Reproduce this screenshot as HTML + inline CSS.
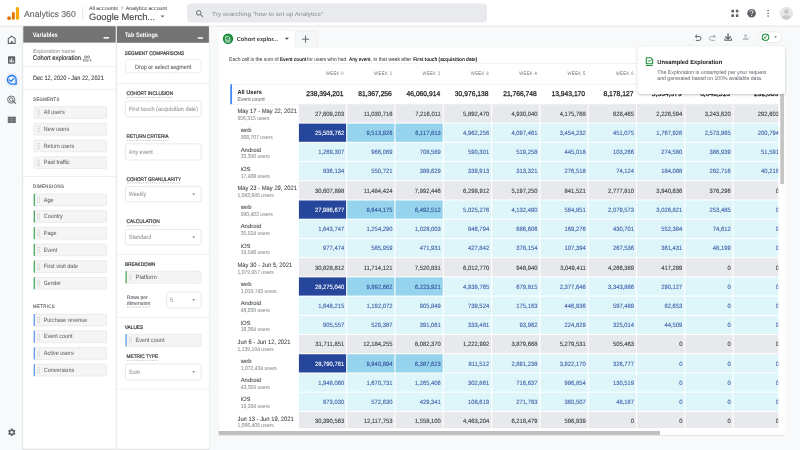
<!DOCTYPE html><html><head><meta charset="utf-8"><style>*{margin:0;padding:0}html,body{width:800px;height:450px;overflow:hidden;background:#f8f9fa}svg{display:block;will-change:transform;text-rendering:geometricPrecision;font-family:"Liberation Sans",sans-serif}</style></head><body>
<svg width="800" height="450" viewBox="0 0 800 450">
<defs><filter id="sh" x="-10%" y="-20%" width="120%" height="150%"><feDropShadow dx="0" dy="0.8" stdDeviation="1.1" flood-color="#3c4043" flood-opacity="0.35"/></filter><filter id="sh2" x="-5%" y="-5%" width="110%" height="110%"><feDropShadow dx="0" dy="0.4" stdDeviation="0.5" flood-color="#3c4043" flood-opacity="0.25"/></filter><clipPath id="tclip"><rect x="218.5" y="63.9" width="559.8" height="364.0"/></clipPath></defs>
<rect x="0.00" y="0.00" width="800.00" height="450.00" fill="#f8f9fa"/>
<rect x="0.00" y="0.00" width="800.00" height="25.60" fill="#ffffff"/>
<rect x="0.00" y="25.60" width="800.00" height="1.00" fill="#e3e5e8"/>
<circle cx="9.1" cy="18.2" r="1.85" fill="#e37400"/>
<rect x="11.90" y="12.00" width="2.90" height="7.80" fill="#e37400" rx="1.40"/>
<rect x="15.90" y="7.00" width="3.20" height="12.80" fill="#f9ab00" rx="1.50"/>
<text x="24.00" y="17.00" font-size="8.66" fill="#5f6368" stroke="#5f6368" stroke-width="0.10" textLength="51.81" lengthAdjust="spacingAndGlyphs">Analytics 360</text>
<rect x="82.40" y="6.50" width="0.80" height="13.00" fill="#dadce0"/>
<text x="88.92" y="9.65" font-size="5.20" fill="#5f6368" stroke="#5f6368" stroke-width="0.10" textLength="28.96" lengthAdjust="spacingAndGlyphs">All accounts</text>
<path d="M121.2 6.4l1.6 1.6-1.6 1.6" fill="none" stroke="#5f6368" stroke-width="0.6"/>
<text x="125.72" y="9.65" font-size="5.20" fill="#5f6368" stroke="#5f6368" stroke-width="0.10" textLength="41.26" lengthAdjust="spacingAndGlyphs">Analytics account</text>
<text x="88.97" y="20.00" font-size="9.40" fill="#3c4043" stroke="#3c4043" stroke-width="0.10" textLength="66.16" lengthAdjust="spacingAndGlyphs">Google Merch...</text>
<path d="M160.5 15.6h4.0l-2.0 2.0z" fill="#5f6368"/>
<rect x="187.00" y="3.50" width="300.00" height="19.10" fill="#e9eaee" rx="4.00"/>
<g transform="translate(195.0,9.0) scale(0.4)"><path fill="#5f6368" d="M15.5 14h-.79l-.28-.27A6.47 6.47 0 0 0 16 9.5 6.5 6.5 0 1 0 9.5 16c1.61 0 3.09-.59 4.23-1.57l.27.28v.79l5 4.99L20.49 19l-4.99-5zm-6 0C7.01 14 5 11.99 5 9.5S7.01 5 9.5 5 14 7.01 14 9.5 11.99 14 9.5 14z"/></g>
<text x="212.09" y="15.50" font-size="5.90" fill="#8d9196" stroke="#8d9196" stroke-width="0.03" textLength="110.71" lengthAdjust="spacingAndGlyphs">Try searching “how to set up Analytics”</text>
<rect x="731.40" y="9.80" width="2.60" height="2.60" fill="#5f6368" rx="0.30"/>
<rect x="735.80" y="9.80" width="2.60" height="2.60" fill="#5f6368" rx="0.30"/>
<rect x="731.40" y="14.30" width="2.60" height="2.60" fill="#5f6368" rx="0.30"/>
<rect x="735.80" y="14.30" width="2.60" height="2.60" fill="#5f6368" rx="0.30"/>
<circle cx="751.6" cy="13.2" r="4.3" fill="#5f6368"/>
<path d="M750.1 12.0c0-.9.7-1.6 1.5-1.6s1.5.6 1.5 1.4c0 1.1-1.4 1.1-1.4 2.3" fill="none" stroke="#fff" stroke-width="0.85"/><circle cx="751.7" cy="15.6" r="0.5" fill="#fff"/>
<circle cx="768.1" cy="10.50" r="0.8" fill="#5f6368"/>
<circle cx="768.1" cy="13.30" r="0.8" fill="#5f6368"/>
<circle cx="768.1" cy="16.10" r="0.8" fill="#5f6368"/>
<circle cx="786.4" cy="13.35" r="6.6" fill="#e6e6e6"/>
<circle cx="786.4" cy="11.6" r="2.3" fill="#c8c8c8"/>
<path d="M782.0 17.6c.9-1.6 2.6-2.4 4.4-2.4s3.5.8 4.4 2.4c-1.1 1.2-2.7 1.9-4.4 1.9s-3.3-.7-4.4-1.9z" fill="#c8c8c8"/>
<rect x="21.90" y="26.60" width="2.00" height="423.40" fill="#eaebed"/>
<path d="M8.3 43.4v-4.6l3.4-2.7 3.4 2.7v4.6z" fill="none" stroke="#5f6368" stroke-width="1.1" stroke-linejoin="round"/>
<rect x="10.90" y="40.90" width="1.70" height="2.50" fill="#5f6368"/>
<rect x="8.00" y="56.20" width="7.20" height="7.60" fill="#5f6368" rx="0.70"/>
<rect x="9.60" y="59.60" width="1.00" height="2.80" fill="#fff"/>
<rect x="11.20" y="58.20" width="1.00" height="4.20" fill="#fff"/>
<rect x="12.80" y="60.60" width="1.00" height="1.80" fill="#fff"/>
<circle cx="11.9" cy="80.0" r="7.2" fill="#e8f0fe"/>
<path d="M15.6 84.1h-3.8a4.3 4.3 0 1 1 4.3-4.3v4.3z" fill="none" stroke="#1a73e8" stroke-width="1.3"/>
<path d="M8.9 79.5l2.0 2.0 3.3-3.3" fill="none" stroke="#1a73e8" stroke-width="1.1"/>
<circle cx="11.2" cy="99.6" r="3.6" fill="none" stroke="#5f6368" stroke-width="0.95"/>
<circle cx="11.2" cy="99.6" r="1.7" fill="none" stroke="#5f6368" stroke-width="0.95"/>
<path d="M11.6 100.0l1.4 3.6 0.7-1.3 1.9 1.9 0.8-0.8-1.9-1.9 1.3-0.7z" fill="#5f6368" stroke="#f8f9fa" stroke-width="0.3"/>
<rect x="7.80" y="116.70" width="8.00" height="6.20" fill="#5f6368"/>
<line x1="8.20" y1="118.80" x2="15.40" y2="118.80" stroke="#a9acb0" stroke-width="0.50"/>
<line x1="8.20" y1="120.80" x2="15.40" y2="120.80" stroke="#a9acb0" stroke-width="0.50"/>
<line x1="11.80" y1="117.10" x2="11.80" y2="122.50" stroke="#a9acb0" stroke-width="0.50"/>
<g transform="translate(7.1,427.6) scale(0.39)"><path fill="#5f6368" d="M19.14 12.94c.04-.3.06-.61.06-.94 0-.32-.02-.64-.07-.94l2.03-1.58a.49.49 0 0 0 .12-.61l-1.92-3.32a.49.49 0 0 0-.59-.22l-2.39.96c-.5-.38-1.03-.7-1.62-.94l-.36-2.54a.484.484 0 0 0-.48-.41h-3.84c-.24 0-.43.17-.47.41l-.36 2.54c-.59.24-1.13.57-1.62.94l-2.39-.96a.49.49 0 0 0-.59.22L2.74 8.87c-.12.21-.08.47.12.61l2.03 1.58c-.05.3-.09.63-.09.94s.02.64.07.94l-2.03 1.58a.49.49 0 0 0-.12.61l1.92 3.32c.12.22.37.29.59.22l2.39-.96c.5.38 1.03.7 1.62.94l.36 2.54c.05.24.24.41.48.41h3.84c.24 0 .44-.17.47-.41l.36-2.54c.59-.24 1.13-.56 1.62-.94l2.39.96c.22.08.47 0 .59-.22l1.92-3.32c.12-.22.07-.47-.12-.61l-2.01-1.58zM12 15.6c-1.98 0-3.6-1.62-3.6-3.6s1.62-3.6 3.6-3.6 3.6 1.62 3.6 3.6-1.62 3.6-3.6 3.6z"/></g>
<rect x="23.30" y="26.20" width="93.00" height="423.00" fill="#ffffff"/>
<rect x="115.70" y="26.20" width="1.20" height="423.80" fill="#e6e7e9"/>
<rect x="23.30" y="448.60" width="186.00" height="1.40" fill="#e6e7e9"/>
<rect x="23.30" y="26.20" width="92.40" height="16.40" fill="#737373"/>
<text x="32.87" y="36.90" font-size="6.60" fill="#ffffff" font-weight="bold" textLength="24.86" lengthAdjust="spacingAndGlyphs">Variables</text>
<rect x="103.60" y="37.10" width="5.40" height="1.50" fill="#ffffff"/>
<text x="32.91" y="53.00" font-size="5.50" fill="#9aa0a6" stroke="#9aa0a6" stroke-width="0.10" textLength="41.98" lengthAdjust="spacingAndGlyphs">Exploration name</text>
<text x="32.87" y="60.30" font-size="6.70" fill="#202124" stroke="#202124" stroke-width="0.10" textLength="48.27" lengthAdjust="spacingAndGlyphs">Cohort exploration</text>
<circle cx="85.6" cy="56.9" r="1.05" fill="none" stroke="#5f6368" stroke-width="0.75"/><circle cx="88.5" cy="56.9" r="1.0" fill="none" stroke="#5f6368" stroke-width="0.75"/>
<path d="M83.1 61.0v-0.6c0-.9 1.5-1.4 2.5-1.4s2.5.5 2.5 1.4v0.6z" fill="none" stroke="#5f6368" stroke-width="0.7"/><path d="M89.2 59.0c.9.1 1.8.6 1.8 1.4v0.6h-1.3" fill="none" stroke="#5f6368" stroke-width="0.7"/>
<rect x="23.30" y="66.30" width="92.40" height="0.70" fill="#e8eaed"/>
<text x="32.88" y="80.10" font-size="6.30" fill="#3c4043" stroke="#3c4043" stroke-width="0.10" textLength="70.94" lengthAdjust="spacingAndGlyphs">Dec 12, 2020 - Jan 22, 2021</text>
<rect x="23.30" y="88.90" width="92.40" height="0.70" fill="#e8eaed"/>
<text x="33.23" y="100.50" font-size="5.00" fill="#5f6368" letter-spacing="0.45" stroke="#5f6368" stroke-width="0.15" textLength="26.45" lengthAdjust="spacingAndGlyphs">SEGMENTS</text>
<rect x="33.90" y="106.60" width="72.60" height="11.80" fill="#f5f5f5" rx="1.20" stroke="#e3e3e3" stroke-width="0.6"/>
<rect x="37.20" y="109.60" width="1.00" height="0.90" fill="#cdcdcd"/>
<rect x="38.90" y="109.60" width="1.00" height="0.90" fill="#cdcdcd"/>
<rect x="37.20" y="111.35" width="1.00" height="0.90" fill="#cdcdcd"/>
<rect x="38.90" y="111.35" width="1.00" height="0.90" fill="#cdcdcd"/>
<rect x="37.20" y="113.10" width="1.00" height="0.90" fill="#cdcdcd"/>
<rect x="38.90" y="113.10" width="1.00" height="0.90" fill="#cdcdcd"/>
<rect x="37.20" y="114.85" width="1.00" height="0.90" fill="#cdcdcd"/>
<rect x="38.90" y="114.85" width="1.00" height="0.90" fill="#cdcdcd"/>
<text x="43.79" y="114.20" font-size="6.00" fill="#5f6368" stroke="#5f6368" stroke-width="0.04" textLength="20.82" lengthAdjust="spacingAndGlyphs">All users</text>
<rect x="33.90" y="123.32" width="72.60" height="11.80" fill="#f5f5f5" rx="1.20" stroke="#e3e3e3" stroke-width="0.6"/>
<rect x="37.20" y="126.32" width="1.00" height="0.90" fill="#cdcdcd"/>
<rect x="38.90" y="126.32" width="1.00" height="0.90" fill="#cdcdcd"/>
<rect x="37.20" y="128.07" width="1.00" height="0.90" fill="#cdcdcd"/>
<rect x="38.90" y="128.07" width="1.00" height="0.90" fill="#cdcdcd"/>
<rect x="37.20" y="129.82" width="1.00" height="0.90" fill="#cdcdcd"/>
<rect x="38.90" y="129.82" width="1.00" height="0.90" fill="#cdcdcd"/>
<rect x="37.20" y="131.57" width="1.00" height="0.90" fill="#cdcdcd"/>
<rect x="38.90" y="131.57" width="1.00" height="0.90" fill="#cdcdcd"/>
<text x="43.79" y="130.92" font-size="6.00" fill="#5f6368" stroke="#5f6368" stroke-width="0.04" textLength="25.42" lengthAdjust="spacingAndGlyphs">New users</text>
<rect x="33.90" y="140.04" width="72.60" height="11.80" fill="#f5f5f5" rx="1.20" stroke="#e3e3e3" stroke-width="0.6"/>
<rect x="37.20" y="143.04" width="1.00" height="0.90" fill="#cdcdcd"/>
<rect x="38.90" y="143.04" width="1.00" height="0.90" fill="#cdcdcd"/>
<rect x="37.20" y="144.79" width="1.00" height="0.90" fill="#cdcdcd"/>
<rect x="38.90" y="144.79" width="1.00" height="0.90" fill="#cdcdcd"/>
<rect x="37.20" y="146.54" width="1.00" height="0.90" fill="#cdcdcd"/>
<rect x="38.90" y="146.54" width="1.00" height="0.90" fill="#cdcdcd"/>
<rect x="37.20" y="148.29" width="1.00" height="0.90" fill="#cdcdcd"/>
<rect x="38.90" y="148.29" width="1.00" height="0.90" fill="#cdcdcd"/>
<text x="43.79" y="147.64" font-size="6.00" fill="#5f6368" stroke="#5f6368" stroke-width="0.04" textLength="30.42" lengthAdjust="spacingAndGlyphs">Return users</text>
<rect x="33.90" y="156.76" width="72.60" height="11.80" fill="#f5f5f5" rx="1.20" stroke="#e3e3e3" stroke-width="0.6"/>
<rect x="37.20" y="159.76" width="1.00" height="0.90" fill="#cdcdcd"/>
<rect x="38.90" y="159.76" width="1.00" height="0.90" fill="#cdcdcd"/>
<rect x="37.20" y="161.51" width="1.00" height="0.90" fill="#cdcdcd"/>
<rect x="38.90" y="161.51" width="1.00" height="0.90" fill="#cdcdcd"/>
<rect x="37.20" y="163.26" width="1.00" height="0.90" fill="#cdcdcd"/>
<rect x="38.90" y="163.26" width="1.00" height="0.90" fill="#cdcdcd"/>
<rect x="37.20" y="165.01" width="1.00" height="0.90" fill="#cdcdcd"/>
<rect x="38.90" y="165.01" width="1.00" height="0.90" fill="#cdcdcd"/>
<text x="43.79" y="164.36" font-size="6.00" fill="#5f6368" stroke="#5f6368" stroke-width="0.04" textLength="26.02" lengthAdjust="spacingAndGlyphs">Paid traffic</text>
<rect x="23.30" y="176.20" width="92.40" height="0.70" fill="#e8eaed"/>
<text x="33.03" y="187.90" font-size="5.00" fill="#5f6368" letter-spacing="0.45" stroke="#5f6368" stroke-width="0.15" textLength="31.15" lengthAdjust="spacingAndGlyphs">DIMENSIONS</text>
<rect x="33.90" y="193.90" width="72.60" height="11.80" fill="#f5f5f5" rx="1.20" stroke="#e3e3e3" stroke-width="0.6"/>
<rect x="33.70" y="193.70" width="1.25" height="12.20" fill="#46ab5c" rx="0.40"/>
<rect x="37.20" y="196.90" width="1.00" height="0.90" fill="#cdcdcd"/>
<rect x="38.90" y="196.90" width="1.00" height="0.90" fill="#cdcdcd"/>
<rect x="37.20" y="198.65" width="1.00" height="0.90" fill="#cdcdcd"/>
<rect x="38.90" y="198.65" width="1.00" height="0.90" fill="#cdcdcd"/>
<rect x="37.20" y="200.40" width="1.00" height="0.90" fill="#cdcdcd"/>
<rect x="38.90" y="200.40" width="1.00" height="0.90" fill="#cdcdcd"/>
<rect x="37.20" y="202.15" width="1.00" height="0.90" fill="#cdcdcd"/>
<rect x="38.90" y="202.15" width="1.00" height="0.90" fill="#cdcdcd"/>
<text x="43.79" y="201.50" font-size="6.00" fill="#5f6368" stroke="#5f6368" stroke-width="0.04" textLength="9.82" lengthAdjust="spacingAndGlyphs">Age</text>
<rect x="33.90" y="210.60" width="72.60" height="11.80" fill="#f5f5f5" rx="1.20" stroke="#e3e3e3" stroke-width="0.6"/>
<rect x="33.70" y="210.40" width="1.25" height="12.20" fill="#46ab5c" rx="0.40"/>
<rect x="37.20" y="213.60" width="1.00" height="0.90" fill="#cdcdcd"/>
<rect x="38.90" y="213.60" width="1.00" height="0.90" fill="#cdcdcd"/>
<rect x="37.20" y="215.35" width="1.00" height="0.90" fill="#cdcdcd"/>
<rect x="38.90" y="215.35" width="1.00" height="0.90" fill="#cdcdcd"/>
<rect x="37.20" y="217.10" width="1.00" height="0.90" fill="#cdcdcd"/>
<rect x="38.90" y="217.10" width="1.00" height="0.90" fill="#cdcdcd"/>
<rect x="37.20" y="218.85" width="1.00" height="0.90" fill="#cdcdcd"/>
<rect x="38.90" y="218.85" width="1.00" height="0.90" fill="#cdcdcd"/>
<text x="43.79" y="218.20" font-size="6.00" fill="#5f6368" stroke="#5f6368" stroke-width="0.04" textLength="19.02" lengthAdjust="spacingAndGlyphs">Country</text>
<rect x="33.90" y="227.30" width="72.60" height="11.80" fill="#f5f5f5" rx="1.20" stroke="#e3e3e3" stroke-width="0.6"/>
<rect x="33.70" y="227.10" width="1.25" height="12.20" fill="#46ab5c" rx="0.40"/>
<rect x="37.20" y="230.30" width="1.00" height="0.90" fill="#cdcdcd"/>
<rect x="38.90" y="230.30" width="1.00" height="0.90" fill="#cdcdcd"/>
<rect x="37.20" y="232.05" width="1.00" height="0.90" fill="#cdcdcd"/>
<rect x="38.90" y="232.05" width="1.00" height="0.90" fill="#cdcdcd"/>
<rect x="37.20" y="233.80" width="1.00" height="0.90" fill="#cdcdcd"/>
<rect x="38.90" y="233.80" width="1.00" height="0.90" fill="#cdcdcd"/>
<rect x="37.20" y="235.55" width="1.00" height="0.90" fill="#cdcdcd"/>
<rect x="38.90" y="235.55" width="1.00" height="0.90" fill="#cdcdcd"/>
<text x="43.79" y="234.90" font-size="6.00" fill="#5f6368" stroke="#5f6368" stroke-width="0.04" textLength="12.62" lengthAdjust="spacingAndGlyphs">Page</text>
<rect x="33.90" y="244.00" width="72.60" height="11.80" fill="#f5f5f5" rx="1.20" stroke="#e3e3e3" stroke-width="0.6"/>
<rect x="33.70" y="243.80" width="1.25" height="12.20" fill="#46ab5c" rx="0.40"/>
<rect x="37.20" y="247.00" width="1.00" height="0.90" fill="#cdcdcd"/>
<rect x="38.90" y="247.00" width="1.00" height="0.90" fill="#cdcdcd"/>
<rect x="37.20" y="248.75" width="1.00" height="0.90" fill="#cdcdcd"/>
<rect x="38.90" y="248.75" width="1.00" height="0.90" fill="#cdcdcd"/>
<rect x="37.20" y="250.50" width="1.00" height="0.90" fill="#cdcdcd"/>
<rect x="38.90" y="250.50" width="1.00" height="0.90" fill="#cdcdcd"/>
<rect x="37.20" y="252.25" width="1.00" height="0.90" fill="#cdcdcd"/>
<rect x="38.90" y="252.25" width="1.00" height="0.90" fill="#cdcdcd"/>
<text x="43.79" y="251.60" font-size="6.00" fill="#5f6368" stroke="#5f6368" stroke-width="0.04" textLength="13.42" lengthAdjust="spacingAndGlyphs">Event</text>
<rect x="33.90" y="260.70" width="72.60" height="11.80" fill="#f5f5f5" rx="1.20" stroke="#e3e3e3" stroke-width="0.6"/>
<rect x="33.70" y="260.50" width="1.25" height="12.20" fill="#46ab5c" rx="0.40"/>
<rect x="37.20" y="263.70" width="1.00" height="0.90" fill="#cdcdcd"/>
<rect x="38.90" y="263.70" width="1.00" height="0.90" fill="#cdcdcd"/>
<rect x="37.20" y="265.45" width="1.00" height="0.90" fill="#cdcdcd"/>
<rect x="38.90" y="265.45" width="1.00" height="0.90" fill="#cdcdcd"/>
<rect x="37.20" y="267.20" width="1.00" height="0.90" fill="#cdcdcd"/>
<rect x="38.90" y="267.20" width="1.00" height="0.90" fill="#cdcdcd"/>
<rect x="37.20" y="268.95" width="1.00" height="0.90" fill="#cdcdcd"/>
<rect x="38.90" y="268.95" width="1.00" height="0.90" fill="#cdcdcd"/>
<text x="43.79" y="268.30" font-size="6.00" fill="#5f6368" stroke="#5f6368" stroke-width="0.04" textLength="34.32" lengthAdjust="spacingAndGlyphs">First visit date</text>
<rect x="33.90" y="277.40" width="72.60" height="11.80" fill="#f5f5f5" rx="1.20" stroke="#e3e3e3" stroke-width="0.6"/>
<rect x="33.70" y="277.20" width="1.25" height="12.20" fill="#46ab5c" rx="0.40"/>
<rect x="37.20" y="280.40" width="1.00" height="0.90" fill="#cdcdcd"/>
<rect x="38.90" y="280.40" width="1.00" height="0.90" fill="#cdcdcd"/>
<rect x="37.20" y="282.15" width="1.00" height="0.90" fill="#cdcdcd"/>
<rect x="38.90" y="282.15" width="1.00" height="0.90" fill="#cdcdcd"/>
<rect x="37.20" y="283.90" width="1.00" height="0.90" fill="#cdcdcd"/>
<rect x="38.90" y="283.90" width="1.00" height="0.90" fill="#cdcdcd"/>
<rect x="37.20" y="285.65" width="1.00" height="0.90" fill="#cdcdcd"/>
<rect x="38.90" y="285.65" width="1.00" height="0.90" fill="#cdcdcd"/>
<text x="43.79" y="285.00" font-size="6.00" fill="#5f6368" stroke="#5f6368" stroke-width="0.04" textLength="17.32" lengthAdjust="spacingAndGlyphs">Gender</text>
<text x="33.12" y="307.80" font-size="5.00" fill="#5f6368" letter-spacing="0.45" stroke="#5f6368" stroke-width="0.15" textLength="21.95" lengthAdjust="spacingAndGlyphs">METRICS</text>
<rect x="33.90" y="314.10" width="72.60" height="11.80" fill="#f5f5f5" rx="1.20" stroke="#e3e3e3" stroke-width="0.6"/>
<rect x="33.70" y="313.90" width="1.25" height="12.20" fill="#5f9bf6" rx="0.40"/>
<rect x="37.20" y="317.10" width="1.00" height="0.90" fill="#cdcdcd"/>
<rect x="38.90" y="317.10" width="1.00" height="0.90" fill="#cdcdcd"/>
<rect x="37.20" y="318.85" width="1.00" height="0.90" fill="#cdcdcd"/>
<rect x="38.90" y="318.85" width="1.00" height="0.90" fill="#cdcdcd"/>
<rect x="37.20" y="320.60" width="1.00" height="0.90" fill="#cdcdcd"/>
<rect x="38.90" y="320.60" width="1.00" height="0.90" fill="#cdcdcd"/>
<rect x="37.20" y="322.35" width="1.00" height="0.90" fill="#cdcdcd"/>
<rect x="38.90" y="322.35" width="1.00" height="0.90" fill="#cdcdcd"/>
<text x="43.79" y="321.70" font-size="6.00" fill="#5f6368" stroke="#5f6368" stroke-width="0.04" textLength="43.32" lengthAdjust="spacingAndGlyphs">Purchase revenue</text>
<rect x="33.90" y="330.82" width="72.60" height="11.80" fill="#f5f5f5" rx="1.20" stroke="#e3e3e3" stroke-width="0.6"/>
<rect x="33.70" y="330.62" width="1.25" height="12.20" fill="#5f9bf6" rx="0.40"/>
<rect x="37.20" y="333.82" width="1.00" height="0.90" fill="#cdcdcd"/>
<rect x="38.90" y="333.82" width="1.00" height="0.90" fill="#cdcdcd"/>
<rect x="37.20" y="335.57" width="1.00" height="0.90" fill="#cdcdcd"/>
<rect x="38.90" y="335.57" width="1.00" height="0.90" fill="#cdcdcd"/>
<rect x="37.20" y="337.32" width="1.00" height="0.90" fill="#cdcdcd"/>
<rect x="38.90" y="337.32" width="1.00" height="0.90" fill="#cdcdcd"/>
<rect x="37.20" y="339.07" width="1.00" height="0.90" fill="#cdcdcd"/>
<rect x="38.90" y="339.07" width="1.00" height="0.90" fill="#cdcdcd"/>
<text x="43.79" y="338.42" font-size="6.00" fill="#5f6368" stroke="#5f6368" stroke-width="0.04" textLength="28.82" lengthAdjust="spacingAndGlyphs">Event count</text>
<rect x="33.90" y="347.54" width="72.60" height="11.80" fill="#f5f5f5" rx="1.20" stroke="#e3e3e3" stroke-width="0.6"/>
<rect x="33.70" y="347.34" width="1.25" height="12.20" fill="#5f9bf6" rx="0.40"/>
<rect x="37.20" y="350.54" width="1.00" height="0.90" fill="#cdcdcd"/>
<rect x="38.90" y="350.54" width="1.00" height="0.90" fill="#cdcdcd"/>
<rect x="37.20" y="352.29" width="1.00" height="0.90" fill="#cdcdcd"/>
<rect x="38.90" y="352.29" width="1.00" height="0.90" fill="#cdcdcd"/>
<rect x="37.20" y="354.04" width="1.00" height="0.90" fill="#cdcdcd"/>
<rect x="38.90" y="354.04" width="1.00" height="0.90" fill="#cdcdcd"/>
<rect x="37.20" y="355.79" width="1.00" height="0.90" fill="#cdcdcd"/>
<rect x="38.90" y="355.79" width="1.00" height="0.90" fill="#cdcdcd"/>
<text x="43.79" y="355.14" font-size="6.00" fill="#5f6368" stroke="#5f6368" stroke-width="0.04" textLength="29.92" lengthAdjust="spacingAndGlyphs">Active users</text>
<rect x="33.90" y="364.26" width="72.60" height="11.80" fill="#f5f5f5" rx="1.20" stroke="#e3e3e3" stroke-width="0.6"/>
<rect x="33.70" y="364.06" width="1.25" height="12.20" fill="#5f9bf6" rx="0.40"/>
<rect x="37.20" y="367.26" width="1.00" height="0.90" fill="#cdcdcd"/>
<rect x="38.90" y="367.26" width="1.00" height="0.90" fill="#cdcdcd"/>
<rect x="37.20" y="369.01" width="1.00" height="0.90" fill="#cdcdcd"/>
<rect x="38.90" y="369.01" width="1.00" height="0.90" fill="#cdcdcd"/>
<rect x="37.20" y="370.76" width="1.00" height="0.90" fill="#cdcdcd"/>
<rect x="38.90" y="370.76" width="1.00" height="0.90" fill="#cdcdcd"/>
<rect x="37.20" y="372.51" width="1.00" height="0.90" fill="#cdcdcd"/>
<rect x="38.90" y="372.51" width="1.00" height="0.90" fill="#cdcdcd"/>
<text x="43.79" y="371.86" font-size="6.00" fill="#5f6368" stroke="#5f6368" stroke-width="0.04" textLength="30.42" lengthAdjust="spacingAndGlyphs">Conversions</text>
<rect x="116.90" y="26.20" width="92.20" height="422.40" fill="#ffffff"/>
<rect x="208.90" y="26.20" width="0.90" height="423.80" fill="#eceef0"/>
<rect x="116.90" y="26.20" width="92.00" height="16.60" fill="#737373"/>
<text x="124.88" y="37.20" font-size="6.40" fill="#ffffff" font-weight="bold" textLength="33.05" lengthAdjust="spacingAndGlyphs">Tab Settings</text>
<rect x="197.80" y="37.30" width="5.20" height="1.50" fill="#ffffff"/>
<text x="124.82" y="55.00" font-size="5.20" fill="#3c4043" stroke="#3c4043" stroke-width="0.22" textLength="59.26" lengthAdjust="spacingAndGlyphs">SEGMENT COMPARISONS</text>
<rect x="125.40" y="59.60" width="75.80" height="13.00" fill="none" rx="2.20" stroke="#cfd1d4" stroke-width="0.8" stroke-dasharray="1 1.1"/>
<text x="134.99" y="68.50" font-size="6.00" fill="#5f6368" stroke="#5f6368" stroke-width="0.10" textLength="56.32" lengthAdjust="spacingAndGlyphs">Drop or select segment</text>
<rect x="116.90" y="83.10" width="92.00" height="0.70" fill="#e8eaed"/>
<text x="126.62" y="95.00" font-size="5.20" fill="#3c4043" stroke="#3c4043" stroke-width="0.22" textLength="46.46" lengthAdjust="spacingAndGlyphs">COHORT INCLUSION</text>
<line x1="126.80" y1="97.40" x2="172.90" y2="97.40" stroke="#9aa0a6" stroke-width="0.70" stroke-dasharray="0.9 0.9"/>
<rect x="125.40" y="101.00" width="75.80" height="15.80" fill="#ffffff" rx="2.50" stroke="#e1e3e6" stroke-width="0.8"/>
<text x="128.79" y="111.00" font-size="6.10" fill="#9aa0a6" stroke="#9aa0a6" stroke-width="0.10" textLength="69.23" lengthAdjust="spacingAndGlyphs">First touch (acquisition date)</text>
<text x="126.62" y="137.90" font-size="5.20" fill="#3c4043" stroke="#3c4043" stroke-width="0.22" textLength="41.96" lengthAdjust="spacingAndGlyphs">RETURN CRITERIA</text>
<line x1="126.80" y1="140.30" x2="168.40" y2="140.30" stroke="#9aa0a6" stroke-width="0.70" stroke-dasharray="0.9 0.9"/>
<rect x="125.40" y="143.80" width="75.80" height="16.20" fill="#ffffff" rx="2.50" stroke="#e1e3e6" stroke-width="0.8"/>
<text x="128.79" y="154.00" font-size="6.10" fill="#9aa0a6" stroke="#9aa0a6" stroke-width="0.10" textLength="24.03" lengthAdjust="spacingAndGlyphs">Any event</text>
<text x="126.62" y="180.50" font-size="5.20" fill="#3c4043" stroke="#3c4043" stroke-width="0.22" textLength="54.56" lengthAdjust="spacingAndGlyphs">COHORT GRANULARITY</text>
<line x1="126.80" y1="182.90" x2="181.00" y2="182.90" stroke="#9aa0a6" stroke-width="0.70" stroke-dasharray="0.9 0.9"/>
<rect x="125.40" y="186.40" width="75.80" height="15.60" fill="#ffffff" rx="2.50" stroke="#e1e3e6" stroke-width="0.8"/>
<text x="128.79" y="196.30" font-size="6.10" fill="#9aa0a6" stroke="#9aa0a6" stroke-width="0.10" textLength="17.43" lengthAdjust="spacingAndGlyphs">Weekly</text>
<path d="M192.10 193.60h3.2l-1.6 1.6z" fill="#80868b"/>
<text x="126.62" y="223.30" font-size="5.20" fill="#3c4043" stroke="#3c4043" stroke-width="0.22" textLength="32.96" lengthAdjust="spacingAndGlyphs">CALCULATION</text>
<line x1="126.80" y1="225.70" x2="159.40" y2="225.70" stroke="#9aa0a6" stroke-width="0.70" stroke-dasharray="0.9 0.9"/>
<rect x="125.40" y="229.40" width="75.80" height="15.60" fill="#ffffff" rx="2.50" stroke="#e1e3e6" stroke-width="0.8"/>
<text x="128.79" y="239.30" font-size="6.10" fill="#9aa0a6" stroke="#9aa0a6" stroke-width="0.10" textLength="22.43" lengthAdjust="spacingAndGlyphs">Standard</text>
<path d="M192.10 236.60h3.2l-1.6 1.6z" fill="#80868b"/>
<rect x="116.90" y="253.90" width="92.00" height="0.70" fill="#e8eaed"/>
<text x="125.02" y="266.20" font-size="5.20" fill="#3c4043" stroke="#3c4043" stroke-width="0.22" textLength="30.36" lengthAdjust="spacingAndGlyphs">BREAKDOWN</text>
<rect x="125.70" y="271.30" width="75.40" height="12.00" fill="#f5f5f5" rx="1.20" stroke="#e3e3e3" stroke-width="0.6"/>
<rect x="125.50" y="271.10" width="1.25" height="12.40" fill="#46ab5c" rx="0.40"/>
<rect x="129.00" y="274.30" width="1.00" height="0.90" fill="#cdcdcd"/>
<rect x="130.70" y="274.30" width="1.00" height="0.90" fill="#cdcdcd"/>
<rect x="129.00" y="276.05" width="1.00" height="0.90" fill="#cdcdcd"/>
<rect x="130.70" y="276.05" width="1.00" height="0.90" fill="#cdcdcd"/>
<rect x="129.00" y="277.80" width="1.00" height="0.90" fill="#cdcdcd"/>
<rect x="130.70" y="277.80" width="1.00" height="0.90" fill="#cdcdcd"/>
<rect x="129.00" y="279.55" width="1.00" height="0.90" fill="#cdcdcd"/>
<rect x="130.70" y="279.55" width="1.00" height="0.90" fill="#cdcdcd"/>
<text x="135.59" y="278.90" font-size="6.00" fill="#5f6368" stroke="#5f6368" stroke-width="0.04" textLength="21.22" lengthAdjust="spacingAndGlyphs">Platform</text>
<text x="126.83" y="299.20" font-size="5.00" fill="#5f6368" stroke="#5f6368" stroke-width="0.10" textLength="20.95" lengthAdjust="spacingAndGlyphs">Rows per</text>
<text x="126.83" y="304.60" font-size="5.00" fill="#5f6368" stroke="#5f6368" stroke-width="0.10" textLength="23.45" lengthAdjust="spacingAndGlyphs">dimension</text>
<line x1="127.00" y1="307.00" x2="150.10" y2="307.00" stroke="#9aa0a6" stroke-width="0.70" stroke-dasharray="0.9 0.9"/>
<rect x="166.70" y="291.80" width="34.50" height="16.30" fill="#ffffff" rx="2.50" stroke="#e1e3e6" stroke-width="0.8"/>
<text x="169.79" y="302.05" font-size="6.10" fill="#9aa0a6" stroke="#9aa0a6" stroke-width="0.10" textLength="3.43" lengthAdjust="spacingAndGlyphs">5</text>
<path d="M192.10 299.35h3.2l-1.6 1.6z" fill="#80868b"/>
<rect x="116.90" y="317.20" width="92.00" height="0.70" fill="#e8eaed"/>
<text x="124.82" y="329.30" font-size="5.20" fill="#3c4043" stroke="#3c4043" stroke-width="0.22" textLength="18.36" lengthAdjust="spacingAndGlyphs">VALUES</text>
<rect x="125.70" y="334.30" width="75.40" height="12.00" fill="#f5f5f5" rx="1.20" stroke="#e3e3e3" stroke-width="0.6"/>
<rect x="125.50" y="334.10" width="1.25" height="12.40" fill="#5f9bf6" rx="0.40"/>
<rect x="129.00" y="337.30" width="1.00" height="0.90" fill="#cdcdcd"/>
<rect x="130.70" y="337.30" width="1.00" height="0.90" fill="#cdcdcd"/>
<rect x="129.00" y="339.05" width="1.00" height="0.90" fill="#cdcdcd"/>
<rect x="130.70" y="339.05" width="1.00" height="0.90" fill="#cdcdcd"/>
<rect x="129.00" y="340.80" width="1.00" height="0.90" fill="#cdcdcd"/>
<rect x="130.70" y="340.80" width="1.00" height="0.90" fill="#cdcdcd"/>
<rect x="129.00" y="342.55" width="1.00" height="0.90" fill="#cdcdcd"/>
<rect x="130.70" y="342.55" width="1.00" height="0.90" fill="#cdcdcd"/>
<text x="135.59" y="341.90" font-size="6.00" fill="#5f6368" stroke="#5f6368" stroke-width="0.04" textLength="28.82" lengthAdjust="spacingAndGlyphs">Event count</text>
<text x="126.62" y="357.90" font-size="5.20" fill="#3c4043" stroke="#3c4043" stroke-width="0.22" textLength="31.56" lengthAdjust="spacingAndGlyphs">METRIC TYPE</text>
<line x1="126.80" y1="360.30" x2="158.00" y2="360.30" stroke="#9aa0a6" stroke-width="0.70" stroke-dasharray="0.9 0.9"/>
<rect x="125.40" y="363.80" width="75.80" height="16.20" fill="#ffffff" rx="2.50" stroke="#e1e3e6" stroke-width="0.8"/>
<text x="128.79" y="374.00" font-size="6.10" fill="#9aa0a6" stroke="#9aa0a6" stroke-width="0.10" textLength="11.43" lengthAdjust="spacingAndGlyphs">Sum</text>
<path d="M192.10 371.30h3.2l-1.6 1.6z" fill="#80868b"/>
<rect x="116.90" y="388.80" width="92.00" height="0.70" fill="#e8eaed"/>
<rect x="218.50" y="47.40" width="566.50" height="387.60" fill="#ffffff" filter="url(#sh2)"/>
<path d="M218.5 49V33.3a2.5 2.5 0 0 1 2.5-2.5h71.5a2.5 2.5 0 0 1 2.5 2.5V49z" fill="#ffffff"/>
<path d="M295 47.6V33.2a2 2 0 0 1 2-2h17.8a2 2 0 0 1 2 2v14.4" fill="#f6f7f8" stroke="#e8e9eb" stroke-width="0.6"/>
<circle cx="228.0" cy="38.8" r="5.2" fill="#1e8e3e"/>
<path d="M225.7 41.0v-4.4h2.9l1.3 1.3v3.1z" fill="none" stroke="#fff" stroke-width="0.75"/>
<path d="M226.6 39.6l0.9-0.8 0.7 0.6 1.0-1.0" fill="none" stroke="#fff" stroke-width="0.6"/>
<rect x="225.60" y="41.70" width="4.50" height="0.60" fill="#ffffff"/>
<text x="236.79" y="41.00" font-size="5.90" fill="#3c4043" font-weight="bold" textLength="41.21" lengthAdjust="spacingAndGlyphs">Cohort explor...</text>
<path d="M284.9 37.8h4.0l-2.0 2.0z" fill="#3c4043"/>
<rect x="302.00" y="38.70" width="7.20" height="0.95" fill="#5f6368"/>
<rect x="305.10" y="35.60" width="0.95" height="7.20" fill="#5f6368"/>
<path d="M695.6 36.4h3.4a2.0 2.0 0 0 1 0 4.0h-3.2" fill="none" stroke="#5f6368" stroke-width="1.0"/><path d="M697.0 34.6l-1.8 1.8 1.8 1.8" fill="none" stroke="#5f6368" stroke-width="1.0"/>
<path d="M715.0 36.4h-3.4a2.0 2.0 0 0 0 0 4.0h3.2" fill="none" stroke="#a6aaae" stroke-width="1.0"/><path d="M713.6 34.6l1.8 1.8-1.8 1.8" fill="none" stroke="#a6aaae" stroke-width="1.0"/>
<path d="M727.4 33.6h1.3v4.0l1.6-1.6 0.9 0.9-3.15 3.15-3.15-3.15 0.9-0.9 1.6 1.6z" fill="#5f6368"/>
<path d="M724.3 38.6h1.1v1.1h5.5v-1.1h1.1v2.2h-7.7z" fill="#5f6368"/>
<circle cx="745.6" cy="35.7" r="1.5" fill="#bdc1c6"/><path d="M742.6 39.9c0-1.4 1.8-2.3 3.0-2.3s3.0.9 3.0 2.3z" fill="#bdc1c6"/>
<rect x="748.60" y="36.90" width="1.80" height="0.60" fill="#bdc1c6"/>
<rect x="758.20" y="31.80" width="23.60" height="10.80" fill="#ffffff" rx="5.40" stroke="#e3e4e6" stroke-width="0.7"/>
<circle cx="765.5" cy="37.2" r="3.3" fill="none" stroke="#1e8e3e" stroke-width="1.05"/>
<path d="M763.4 39.2l4.1-4.0" stroke="#1e8e3e" stroke-width="1.0"/><path d="M764.2 37.4l1.2 1.2" stroke="#1e8e3e" stroke-width="0.9"/>
<path d="M774.1 36.5h2.9l-1.45 1.3z" fill="#3c4043"/>
<text x="229.11" y="60.50" font-size="5.45" fill="#5f6368" stroke="#5f6368" stroke-width="0.10" textLength="49.48" lengthAdjust="spacingAndGlyphs">Each cell is the sum of</text>
<text x="279.91" y="60.50" font-size="5.45" fill="#202124" font-weight="bold" textLength="26.48" lengthAdjust="spacingAndGlyphs">Event count</text>
<text x="307.11" y="60.50" font-size="5.45" fill="#5f6368" stroke="#5f6368" stroke-width="0.10" textLength="39.08" lengthAdjust="spacingAndGlyphs">for users who had</text>
<text x="349.01" y="60.50" font-size="5.45" fill="#202124" font-weight="bold" textLength="21.38" lengthAdjust="spacingAndGlyphs">Any event</text>
<text x="370.61" y="60.50" font-size="5.45" fill="#5f6368" stroke="#5f6368" stroke-width="0.10" textLength="1.18" lengthAdjust="spacingAndGlyphs">,</text>
<text x="373.51" y="60.50" font-size="5.45" fill="#5f6368" stroke="#5f6368" stroke-width="0.10" textLength="37.78" lengthAdjust="spacingAndGlyphs">in that week after</text>
<text x="413.21" y="60.50" font-size="5.45" fill="#202124" font-weight="bold" textLength="63.98" lengthAdjust="spacingAndGlyphs">First touch (acquisition date)</text>
<rect x="230.00" y="63.20" width="549.00" height="0.60" fill="#e8eaed"/>
<g clip-path="url(#tclip)">
<text x="344.08" y="74.80" font-size="5.10" fill="#80868b" text-anchor="end" letter-spacing="0.50" stroke="#80868b" stroke-width="0.05" textLength="18.16" lengthAdjust="spacingAndGlyphs">WEEK 0</text>
<text x="392.39" y="74.80" font-size="5.10" fill="#80868b" text-anchor="end" letter-spacing="0.50" stroke="#80868b" stroke-width="0.05" textLength="18.16" lengthAdjust="spacingAndGlyphs">WEEK 1</text>
<text x="440.70" y="74.80" font-size="5.10" fill="#80868b" text-anchor="end" letter-spacing="0.50" stroke="#80868b" stroke-width="0.05" textLength="18.16" lengthAdjust="spacingAndGlyphs">WEEK 2</text>
<text x="489.01" y="74.80" font-size="5.10" fill="#80868b" text-anchor="end" letter-spacing="0.50" stroke="#80868b" stroke-width="0.05" textLength="18.16" lengthAdjust="spacingAndGlyphs">WEEK 3</text>
<text x="537.32" y="74.80" font-size="5.10" fill="#80868b" text-anchor="end" letter-spacing="0.50" stroke="#80868b" stroke-width="0.05" textLength="18.16" lengthAdjust="spacingAndGlyphs">WEEK 4</text>
<text x="585.63" y="74.80" font-size="5.10" fill="#80868b" text-anchor="end" letter-spacing="0.50" stroke="#80868b" stroke-width="0.05" textLength="18.16" lengthAdjust="spacingAndGlyphs">WEEK 5</text>
<text x="633.94" y="74.80" font-size="5.10" fill="#80868b" text-anchor="end" letter-spacing="0.50" stroke="#80868b" stroke-width="0.05" textLength="18.16" lengthAdjust="spacingAndGlyphs">WEEK 6</text>
<text x="682.25" y="74.80" font-size="5.10" fill="#80868b" text-anchor="end" letter-spacing="0.50" stroke="#80868b" stroke-width="0.05" textLength="18.16" lengthAdjust="spacingAndGlyphs">WEEK 7</text>
<text x="730.56" y="74.80" font-size="5.10" fill="#80868b" text-anchor="end" letter-spacing="0.50" stroke="#80868b" stroke-width="0.05" textLength="18.16" lengthAdjust="spacingAndGlyphs">WEEK 8</text>
<text x="778.87" y="74.80" font-size="5.10" fill="#80868b" text-anchor="end" letter-spacing="0.50" stroke="#80868b" stroke-width="0.05" textLength="18.16" lengthAdjust="spacingAndGlyphs">WEEK 9</text>
<rect x="230.00" y="83.90" width="560.00" height="0.60" fill="#e8eaed"/>
<rect x="230.00" y="103.90" width="560.00" height="0.60" fill="#e8eaed"/>
<rect x="230.25" y="84.30" width="1.80" height="19.80" fill="#4285f4"/>
<text x="237.49" y="93.50" font-size="6.00" fill="#202124" font-weight="bold" textLength="24.42" lengthAdjust="spacingAndGlyphs">All Users</text>
<text x="237.50" y="100.70" font-size="5.60" fill="#80868b" stroke="#80868b" stroke-width="0.10" textLength="27.09" lengthAdjust="spacingAndGlyphs">Event count</text>
<text x="343.54" y="96.00" font-size="7.00" fill="#202124" text-anchor="end" stroke="#202124" stroke-width="0.26" textLength="37.35" lengthAdjust="spacingAndGlyphs">238,394,201</text>
<text x="391.85" y="96.00" font-size="7.00" fill="#202124" text-anchor="end" stroke="#202124" stroke-width="0.26" textLength="33.61" lengthAdjust="spacingAndGlyphs">81,367,256</text>
<text x="440.16" y="96.00" font-size="7.00" fill="#202124" text-anchor="end" stroke="#202124" stroke-width="0.26" textLength="33.61" lengthAdjust="spacingAndGlyphs">46,060,914</text>
<text x="488.47" y="96.00" font-size="7.00" fill="#202124" text-anchor="end" stroke="#202124" stroke-width="0.26" textLength="33.61" lengthAdjust="spacingAndGlyphs">30,976,138</text>
<text x="536.79" y="96.00" font-size="7.00" fill="#202124" text-anchor="end" stroke="#202124" stroke-width="0.26" textLength="33.61" lengthAdjust="spacingAndGlyphs">21,766,748</text>
<text x="585.10" y="96.00" font-size="7.00" fill="#202124" text-anchor="end" stroke="#202124" stroke-width="0.26" textLength="33.61" lengthAdjust="spacingAndGlyphs">13,943,170</text>
<text x="633.41" y="96.00" font-size="7.00" fill="#202124" text-anchor="end" stroke="#202124" stroke-width="0.26" textLength="29.88" lengthAdjust="spacingAndGlyphs">8,178,127</text>
<text x="681.72" y="96.00" font-size="7.00" fill="#202124" text-anchor="end" stroke="#202124" stroke-width="0.26" textLength="29.88" lengthAdjust="spacingAndGlyphs">5,534,379</text>
<text x="730.03" y="96.00" font-size="7.00" fill="#202124" text-anchor="end" stroke="#202124" stroke-width="0.26" textLength="29.88" lengthAdjust="spacingAndGlyphs">6,640,513</text>
<text x="778.34" y="96.00" font-size="7.00" fill="#202124" text-anchor="end" stroke="#202124" stroke-width="0.26" textLength="24.28" lengthAdjust="spacingAndGlyphs">292,603</text>
<text x="237.48" y="113.15" font-size="6.30" fill="#3c4043" stroke="#3c4043" stroke-width="0.06" textLength="59.60" lengthAdjust="spacingAndGlyphs">May 17 - May 22, 2021</text>
<text x="237.50" y="119.90" font-size="5.60" fill="#8f9499" stroke="#8f9499" stroke-width="0.08" textLength="32.00" lengthAdjust="spacingAndGlyphs">956,315 users</text>
<rect x="298.90" y="104.40" width="47.20" height="18.20" fill="#e8e9ed"/>
<text x="344.22" y="115.75" font-size="6.20" fill="#3c4043" text-anchor="end" stroke="#3c4043" stroke-width="0.10" textLength="29.30" lengthAdjust="spacingAndGlyphs">27,609,203</text>
<rect x="347.21" y="104.40" width="47.20" height="18.20" fill="#e8e9ed"/>
<text x="392.53" y="115.75" font-size="6.20" fill="#3c4043" text-anchor="end" stroke="#3c4043" stroke-width="0.10" textLength="28.87" lengthAdjust="spacingAndGlyphs">11,030,716</text>
<rect x="395.52" y="104.40" width="47.20" height="18.20" fill="#e8e9ed"/>
<text x="440.84" y="115.75" font-size="6.20" fill="#3c4043" text-anchor="end" stroke="#3c4043" stroke-width="0.10" textLength="25.61" lengthAdjust="spacingAndGlyphs">7,216,011</text>
<rect x="443.83" y="104.40" width="47.20" height="18.20" fill="#e8e9ed"/>
<text x="489.15" y="115.75" font-size="6.20" fill="#3c4043" text-anchor="end" stroke="#3c4043" stroke-width="0.10" textLength="26.04" lengthAdjust="spacingAndGlyphs">5,892,470</text>
<rect x="492.14" y="104.40" width="47.20" height="18.20" fill="#e8e9ed"/>
<text x="537.46" y="115.75" font-size="6.20" fill="#3c4043" text-anchor="end" stroke="#3c4043" stroke-width="0.10" textLength="26.04" lengthAdjust="spacingAndGlyphs">4,930,040</text>
<rect x="540.45" y="104.40" width="47.20" height="18.20" fill="#e8e9ed"/>
<text x="585.77" y="115.75" font-size="6.20" fill="#3c4043" text-anchor="end" stroke="#3c4043" stroke-width="0.10" textLength="26.04" lengthAdjust="spacingAndGlyphs">4,175,768</text>
<rect x="588.76" y="104.40" width="47.20" height="18.20" fill="#e8e9ed"/>
<text x="634.08" y="115.75" font-size="6.20" fill="#3c4043" text-anchor="end" stroke="#3c4043" stroke-width="0.10" textLength="21.16" lengthAdjust="spacingAndGlyphs">628,465</text>
<rect x="637.07" y="104.40" width="47.20" height="18.20" fill="#e8e9ed"/>
<text x="682.39" y="115.75" font-size="6.20" fill="#3c4043" text-anchor="end" stroke="#3c4043" stroke-width="0.10" textLength="26.04" lengthAdjust="spacingAndGlyphs">2,226,594</text>
<rect x="685.38" y="104.40" width="47.20" height="18.20" fill="#e8e9ed"/>
<text x="730.70" y="115.75" font-size="6.20" fill="#3c4043" text-anchor="end" stroke="#3c4043" stroke-width="0.10" textLength="26.04" lengthAdjust="spacingAndGlyphs">3,243,620</text>
<rect x="733.69" y="104.40" width="47.20" height="18.20" fill="#e8e9ed"/>
<text x="779.01" y="115.75" font-size="6.20" fill="#3c4043" text-anchor="end" stroke="#3c4043" stroke-width="0.10" textLength="21.16" lengthAdjust="spacingAndGlyphs">292,603</text>
<text x="240.69" y="132.37" font-size="5.90" fill="#3c4043" stroke="#3c4043" stroke-width="0.06" textLength="10.82" lengthAdjust="spacingAndGlyphs">web</text>
<text x="240.70" y="139.12" font-size="5.60" fill="#8f9499" stroke="#8f9499" stroke-width="0.08" textLength="32.00" lengthAdjust="spacingAndGlyphs">908,707 users</text>
<rect x="298.90" y="123.62" width="47.20" height="18.20" fill="#25469a"/>
<text x="344.22" y="134.97" font-size="6.20" fill="#ffffff" text-anchor="end" stroke="#ffffff" stroke-width="0.10" textLength="29.30" lengthAdjust="spacingAndGlyphs">25,503,762</text>
<rect x="347.21" y="123.62" width="47.20" height="18.20" fill="#96d4ed"/>
<text x="392.53" y="134.97" font-size="6.20" fill="#30509c" text-anchor="end" stroke="#30509c" stroke-width="0.10" textLength="26.04" lengthAdjust="spacingAndGlyphs">9,513,926</text>
<rect x="395.52" y="123.62" width="47.20" height="18.20" fill="#96d4ed"/>
<text x="440.84" y="134.97" font-size="6.20" fill="#30509c" text-anchor="end" stroke="#30509c" stroke-width="0.10" textLength="25.61" lengthAdjust="spacingAndGlyphs">6,117,813</text>
<rect x="443.83" y="123.62" width="47.20" height="18.20" fill="#def6fa"/>
<text x="489.15" y="134.97" font-size="6.20" fill="#3f5fa8" text-anchor="end" stroke="#3f5fa8" stroke-width="0.10" textLength="26.04" lengthAdjust="spacingAndGlyphs">4,962,256</text>
<rect x="492.14" y="123.62" width="47.20" height="18.20" fill="#def6fa"/>
<text x="537.46" y="134.97" font-size="6.20" fill="#3f5fa8" text-anchor="end" stroke="#3f5fa8" stroke-width="0.10" textLength="26.04" lengthAdjust="spacingAndGlyphs">4,097,461</text>
<rect x="540.45" y="123.62" width="47.20" height="18.20" fill="#def6fa"/>
<text x="585.77" y="134.97" font-size="6.20" fill="#3f5fa8" text-anchor="end" stroke="#3f5fa8" stroke-width="0.10" textLength="26.04" lengthAdjust="spacingAndGlyphs">3,454,232</text>
<rect x="588.76" y="123.62" width="47.20" height="18.20" fill="#def6fa"/>
<text x="634.08" y="134.97" font-size="6.20" fill="#3f5fa8" text-anchor="end" stroke="#3f5fa8" stroke-width="0.10" textLength="21.16" lengthAdjust="spacingAndGlyphs">451,075</text>
<rect x="637.07" y="123.62" width="47.20" height="18.20" fill="#def6fa"/>
<text x="682.39" y="134.97" font-size="6.20" fill="#3f5fa8" text-anchor="end" stroke="#3f5fa8" stroke-width="0.10" textLength="26.04" lengthAdjust="spacingAndGlyphs">1,767,926</text>
<rect x="685.38" y="123.62" width="47.20" height="18.20" fill="#def6fa"/>
<text x="730.70" y="134.97" font-size="6.20" fill="#3f5fa8" text-anchor="end" stroke="#3f5fa8" stroke-width="0.10" textLength="26.04" lengthAdjust="spacingAndGlyphs">2,573,965</text>
<rect x="733.69" y="123.62" width="47.20" height="18.20" fill="#def6fa"/>
<text x="779.01" y="134.97" font-size="6.20" fill="#3f5fa8" text-anchor="end" stroke="#3f5fa8" stroke-width="0.10" textLength="21.16" lengthAdjust="spacingAndGlyphs">200,794</text>
<text x="240.69" y="151.59" font-size="5.90" fill="#3c4043" stroke="#3c4043" stroke-width="0.06" textLength="20.34" lengthAdjust="spacingAndGlyphs">Android</text>
<text x="240.70" y="158.34" font-size="5.60" fill="#8f9499" stroke="#8f9499" stroke-width="0.08" textLength="29.19" lengthAdjust="spacingAndGlyphs">33,350 users</text>
<rect x="298.90" y="142.84" width="47.20" height="18.20" fill="#def6fa"/>
<text x="344.22" y="154.19" font-size="6.20" fill="#3f5fa8" text-anchor="end" stroke="#3f5fa8" stroke-width="0.10" textLength="26.04" lengthAdjust="spacingAndGlyphs">1,269,307</text>
<rect x="347.21" y="142.84" width="47.20" height="18.20" fill="#def6fa"/>
<text x="392.53" y="154.19" font-size="6.20" fill="#3f5fa8" text-anchor="end" stroke="#3f5fa8" stroke-width="0.10" textLength="21.16" lengthAdjust="spacingAndGlyphs">966,069</text>
<rect x="395.52" y="142.84" width="47.20" height="18.20" fill="#def6fa"/>
<text x="440.84" y="154.19" font-size="6.20" fill="#3f5fa8" text-anchor="end" stroke="#3f5fa8" stroke-width="0.10" textLength="21.16" lengthAdjust="spacingAndGlyphs">708,569</text>
<rect x="443.83" y="142.84" width="47.20" height="18.20" fill="#def6fa"/>
<text x="489.15" y="154.19" font-size="6.20" fill="#3f5fa8" text-anchor="end" stroke="#3f5fa8" stroke-width="0.10" textLength="21.16" lengthAdjust="spacingAndGlyphs">590,301</text>
<rect x="492.14" y="142.84" width="47.20" height="18.20" fill="#def6fa"/>
<text x="537.46" y="154.19" font-size="6.20" fill="#3f5fa8" text-anchor="end" stroke="#3f5fa8" stroke-width="0.10" textLength="21.16" lengthAdjust="spacingAndGlyphs">519,258</text>
<rect x="540.45" y="142.84" width="47.20" height="18.20" fill="#def6fa"/>
<text x="585.77" y="154.19" font-size="6.20" fill="#3f5fa8" text-anchor="end" stroke="#3f5fa8" stroke-width="0.10" textLength="21.16" lengthAdjust="spacingAndGlyphs">445,018</text>
<rect x="588.76" y="142.84" width="47.20" height="18.20" fill="#def6fa"/>
<text x="634.08" y="154.19" font-size="6.20" fill="#3f5fa8" text-anchor="end" stroke="#3f5fa8" stroke-width="0.10" textLength="21.16" lengthAdjust="spacingAndGlyphs">103,266</text>
<rect x="637.07" y="142.84" width="47.20" height="18.20" fill="#def6fa"/>
<text x="682.39" y="154.19" font-size="6.20" fill="#3f5fa8" text-anchor="end" stroke="#3f5fa8" stroke-width="0.10" textLength="21.16" lengthAdjust="spacingAndGlyphs">274,580</text>
<rect x="685.38" y="142.84" width="47.20" height="18.20" fill="#def6fa"/>
<text x="730.70" y="154.19" font-size="6.20" fill="#3f5fa8" text-anchor="end" stroke="#3f5fa8" stroke-width="0.10" textLength="21.16" lengthAdjust="spacingAndGlyphs">386,939</text>
<rect x="733.69" y="142.84" width="47.20" height="18.20" fill="#def6fa"/>
<text x="779.01" y="154.19" font-size="6.20" fill="#3f5fa8" text-anchor="end" stroke="#3f5fa8" stroke-width="0.10" textLength="17.91" lengthAdjust="spacingAndGlyphs">51,591</text>
<text x="240.69" y="170.81" font-size="5.90" fill="#3c4043" stroke="#3c4043" stroke-width="0.06" textLength="9.84" lengthAdjust="spacingAndGlyphs">iOS</text>
<text x="240.70" y="177.56" font-size="5.60" fill="#8f9499" stroke="#8f9499" stroke-width="0.08" textLength="29.19" lengthAdjust="spacingAndGlyphs">17,408 users</text>
<rect x="298.90" y="162.06" width="47.20" height="18.20" fill="#def6fa"/>
<text x="344.22" y="173.41" font-size="6.20" fill="#3f5fa8" text-anchor="end" stroke="#3f5fa8" stroke-width="0.10" textLength="21.16" lengthAdjust="spacingAndGlyphs">836,134</text>
<rect x="347.21" y="162.06" width="47.20" height="18.20" fill="#def6fa"/>
<text x="392.53" y="173.41" font-size="6.20" fill="#3f5fa8" text-anchor="end" stroke="#3f5fa8" stroke-width="0.10" textLength="21.16" lengthAdjust="spacingAndGlyphs">550,721</text>
<rect x="395.52" y="162.06" width="47.20" height="18.20" fill="#def6fa"/>
<text x="440.84" y="173.41" font-size="6.20" fill="#3f5fa8" text-anchor="end" stroke="#3f5fa8" stroke-width="0.10" textLength="21.16" lengthAdjust="spacingAndGlyphs">389,629</text>
<rect x="443.83" y="162.06" width="47.20" height="18.20" fill="#def6fa"/>
<text x="489.15" y="173.41" font-size="6.20" fill="#3f5fa8" text-anchor="end" stroke="#3f5fa8" stroke-width="0.10" textLength="21.16" lengthAdjust="spacingAndGlyphs">339,913</text>
<rect x="492.14" y="162.06" width="47.20" height="18.20" fill="#def6fa"/>
<text x="537.46" y="173.41" font-size="6.20" fill="#3f5fa8" text-anchor="end" stroke="#3f5fa8" stroke-width="0.10" textLength="21.16" lengthAdjust="spacingAndGlyphs">313,321</text>
<rect x="540.45" y="162.06" width="47.20" height="18.20" fill="#def6fa"/>
<text x="585.77" y="173.41" font-size="6.20" fill="#3f5fa8" text-anchor="end" stroke="#3f5fa8" stroke-width="0.10" textLength="21.16" lengthAdjust="spacingAndGlyphs">276,518</text>
<rect x="588.76" y="162.06" width="47.20" height="18.20" fill="#def6fa"/>
<text x="634.08" y="173.41" font-size="6.20" fill="#3f5fa8" text-anchor="end" stroke="#3f5fa8" stroke-width="0.10" textLength="17.91" lengthAdjust="spacingAndGlyphs">74,124</text>
<rect x="637.07" y="162.06" width="47.20" height="18.20" fill="#def6fa"/>
<text x="682.39" y="173.41" font-size="6.20" fill="#3f5fa8" text-anchor="end" stroke="#3f5fa8" stroke-width="0.10" textLength="21.16" lengthAdjust="spacingAndGlyphs">184,088</text>
<rect x="685.38" y="162.06" width="47.20" height="18.20" fill="#def6fa"/>
<text x="730.70" y="173.41" font-size="6.20" fill="#3f5fa8" text-anchor="end" stroke="#3f5fa8" stroke-width="0.10" textLength="21.16" lengthAdjust="spacingAndGlyphs">282,716</text>
<rect x="733.69" y="162.06" width="47.20" height="18.20" fill="#def6fa"/>
<text x="779.01" y="173.41" font-size="6.20" fill="#3f5fa8" text-anchor="end" stroke="#3f5fa8" stroke-width="0.10" textLength="17.91" lengthAdjust="spacingAndGlyphs">40,218</text>
<text x="237.48" y="190.03" font-size="6.30" fill="#3c4043" stroke="#3c4043" stroke-width="0.06" textLength="59.60" lengthAdjust="spacingAndGlyphs">May 23 - May 29, 2021</text>
<text x="237.50" y="196.78" font-size="5.60" fill="#8f9499" stroke="#8f9499" stroke-width="0.08" textLength="36.21" lengthAdjust="spacingAndGlyphs">1,043,645 users</text>
<rect x="298.90" y="181.28" width="47.20" height="18.20" fill="#e8e9ed"/>
<text x="344.22" y="192.63" font-size="6.20" fill="#3c4043" text-anchor="end" stroke="#3c4043" stroke-width="0.10" textLength="29.30" lengthAdjust="spacingAndGlyphs">30,607,898</text>
<rect x="347.21" y="181.28" width="47.20" height="18.20" fill="#e8e9ed"/>
<text x="392.53" y="192.63" font-size="6.20" fill="#3c4043" text-anchor="end" stroke="#3c4043" stroke-width="0.10" textLength="28.87" lengthAdjust="spacingAndGlyphs">11,484,424</text>
<rect x="395.52" y="181.28" width="47.20" height="18.20" fill="#e8e9ed"/>
<text x="440.84" y="192.63" font-size="6.20" fill="#3c4043" text-anchor="end" stroke="#3c4043" stroke-width="0.10" textLength="26.04" lengthAdjust="spacingAndGlyphs">7,992,446</text>
<rect x="443.83" y="181.28" width="47.20" height="18.20" fill="#e8e9ed"/>
<text x="489.15" y="192.63" font-size="6.20" fill="#3c4043" text-anchor="end" stroke="#3c4043" stroke-width="0.10" textLength="26.04" lengthAdjust="spacingAndGlyphs">6,299,912</text>
<rect x="492.14" y="181.28" width="47.20" height="18.20" fill="#e8e9ed"/>
<text x="537.46" y="192.63" font-size="6.20" fill="#3c4043" text-anchor="end" stroke="#3c4043" stroke-width="0.10" textLength="26.04" lengthAdjust="spacingAndGlyphs">5,197,250</text>
<rect x="540.45" y="181.28" width="47.20" height="18.20" fill="#e8e9ed"/>
<text x="585.77" y="192.63" font-size="6.20" fill="#3c4043" text-anchor="end" stroke="#3c4043" stroke-width="0.10" textLength="21.16" lengthAdjust="spacingAndGlyphs">841,521</text>
<rect x="588.76" y="181.28" width="47.20" height="18.20" fill="#e8e9ed"/>
<text x="634.08" y="192.63" font-size="6.20" fill="#3c4043" text-anchor="end" stroke="#3c4043" stroke-width="0.10" textLength="26.04" lengthAdjust="spacingAndGlyphs">2,777,810</text>
<rect x="637.07" y="181.28" width="47.20" height="18.20" fill="#e8e9ed"/>
<text x="682.39" y="192.63" font-size="6.20" fill="#3c4043" text-anchor="end" stroke="#3c4043" stroke-width="0.10" textLength="26.04" lengthAdjust="spacingAndGlyphs">3,940,636</text>
<rect x="685.38" y="181.28" width="47.20" height="18.20" fill="#e8e9ed"/>
<text x="730.70" y="192.63" font-size="6.20" fill="#3c4043" text-anchor="end" stroke="#3c4043" stroke-width="0.10" textLength="21.16" lengthAdjust="spacingAndGlyphs">376,296</text>
<rect x="733.69" y="181.28" width="47.20" height="18.20" fill="#e8e9ed"/>
<text x="779.01" y="192.63" font-size="6.20" fill="#3c4043" text-anchor="end" stroke="#3c4043" stroke-width="0.10" textLength="3.26" lengthAdjust="spacingAndGlyphs">0</text>
<text x="240.69" y="209.25" font-size="5.90" fill="#3c4043" stroke="#3c4043" stroke-width="0.06" textLength="10.82" lengthAdjust="spacingAndGlyphs">web</text>
<text x="240.70" y="216.00" font-size="5.60" fill="#8f9499" stroke="#8f9499" stroke-width="0.08" textLength="32.00" lengthAdjust="spacingAndGlyphs">990,402 users</text>
<rect x="298.90" y="200.50" width="47.20" height="18.20" fill="#25469a"/>
<text x="344.22" y="211.85" font-size="6.20" fill="#ffffff" text-anchor="end" stroke="#ffffff" stroke-width="0.10" textLength="29.30" lengthAdjust="spacingAndGlyphs">27,986,677</text>
<rect x="347.21" y="200.50" width="47.20" height="18.20" fill="#96d4ed"/>
<text x="392.53" y="211.85" font-size="6.20" fill="#30509c" text-anchor="end" stroke="#30509c" stroke-width="0.10" textLength="26.04" lengthAdjust="spacingAndGlyphs">9,644,175</text>
<rect x="395.52" y="200.50" width="47.20" height="18.20" fill="#96d4ed"/>
<text x="440.84" y="211.85" font-size="6.20" fill="#30509c" text-anchor="end" stroke="#30509c" stroke-width="0.10" textLength="26.04" lengthAdjust="spacingAndGlyphs">6,492,512</text>
<rect x="443.83" y="200.50" width="47.20" height="18.20" fill="#def6fa"/>
<text x="489.15" y="211.85" font-size="6.20" fill="#3f5fa8" text-anchor="end" stroke="#3f5fa8" stroke-width="0.10" textLength="26.04" lengthAdjust="spacingAndGlyphs">5,025,276</text>
<rect x="492.14" y="200.50" width="47.20" height="18.20" fill="#def6fa"/>
<text x="537.46" y="211.85" font-size="6.20" fill="#3f5fa8" text-anchor="end" stroke="#3f5fa8" stroke-width="0.10" textLength="26.04" lengthAdjust="spacingAndGlyphs">4,132,490</text>
<rect x="540.45" y="200.50" width="47.20" height="18.20" fill="#def6fa"/>
<text x="585.77" y="211.85" font-size="6.20" fill="#3f5fa8" text-anchor="end" stroke="#3f5fa8" stroke-width="0.10" textLength="21.16" lengthAdjust="spacingAndGlyphs">564,851</text>
<rect x="588.76" y="200.50" width="47.20" height="18.20" fill="#def6fa"/>
<text x="634.08" y="211.85" font-size="6.20" fill="#3f5fa8" text-anchor="end" stroke="#3f5fa8" stroke-width="0.10" textLength="26.04" lengthAdjust="spacingAndGlyphs">2,079,573</text>
<rect x="637.07" y="200.50" width="47.20" height="18.20" fill="#def6fa"/>
<text x="682.39" y="211.85" font-size="6.20" fill="#3f5fa8" text-anchor="end" stroke="#3f5fa8" stroke-width="0.10" textLength="26.04" lengthAdjust="spacingAndGlyphs">3,026,821</text>
<rect x="685.38" y="200.50" width="47.20" height="18.20" fill="#def6fa"/>
<text x="730.70" y="211.85" font-size="6.20" fill="#3f5fa8" text-anchor="end" stroke="#3f5fa8" stroke-width="0.10" textLength="21.16" lengthAdjust="spacingAndGlyphs">253,485</text>
<rect x="733.69" y="200.50" width="47.20" height="18.20" fill="#def6fa"/>
<text x="779.01" y="211.85" font-size="6.20" fill="#3f5fa8" text-anchor="end" stroke="#3f5fa8" stroke-width="0.10" textLength="3.26" lengthAdjust="spacingAndGlyphs">0</text>
<text x="240.69" y="228.47" font-size="5.90" fill="#3c4043" stroke="#3c4043" stroke-width="0.06" textLength="20.34" lengthAdjust="spacingAndGlyphs">Android</text>
<text x="240.70" y="235.22" font-size="5.60" fill="#8f9499" stroke="#8f9499" stroke-width="0.08" textLength="29.19" lengthAdjust="spacingAndGlyphs">35,524 users</text>
<rect x="298.90" y="219.72" width="47.20" height="18.20" fill="#def6fa"/>
<text x="344.22" y="231.07" font-size="6.20" fill="#3f5fa8" text-anchor="end" stroke="#3f5fa8" stroke-width="0.10" textLength="26.04" lengthAdjust="spacingAndGlyphs">1,643,747</text>
<rect x="347.21" y="219.72" width="47.20" height="18.20" fill="#def6fa"/>
<text x="392.53" y="231.07" font-size="6.20" fill="#3f5fa8" text-anchor="end" stroke="#3f5fa8" stroke-width="0.10" textLength="26.04" lengthAdjust="spacingAndGlyphs">1,254,290</text>
<rect x="395.52" y="219.72" width="47.20" height="18.20" fill="#def6fa"/>
<text x="440.84" y="231.07" font-size="6.20" fill="#3f5fa8" text-anchor="end" stroke="#3f5fa8" stroke-width="0.10" textLength="26.04" lengthAdjust="spacingAndGlyphs">1,028,003</text>
<rect x="443.83" y="219.72" width="47.20" height="18.20" fill="#def6fa"/>
<text x="489.15" y="231.07" font-size="6.20" fill="#3f5fa8" text-anchor="end" stroke="#3f5fa8" stroke-width="0.10" textLength="21.16" lengthAdjust="spacingAndGlyphs">846,794</text>
<rect x="492.14" y="219.72" width="47.20" height="18.20" fill="#def6fa"/>
<text x="537.46" y="231.07" font-size="6.20" fill="#3f5fa8" text-anchor="end" stroke="#3f5fa8" stroke-width="0.10" textLength="21.16" lengthAdjust="spacingAndGlyphs">686,606</text>
<rect x="540.45" y="219.72" width="47.20" height="18.20" fill="#def6fa"/>
<text x="585.77" y="231.07" font-size="6.20" fill="#3f5fa8" text-anchor="end" stroke="#3f5fa8" stroke-width="0.10" textLength="21.16" lengthAdjust="spacingAndGlyphs">169,276</text>
<rect x="588.76" y="219.72" width="47.20" height="18.20" fill="#def6fa"/>
<text x="634.08" y="231.07" font-size="6.20" fill="#3f5fa8" text-anchor="end" stroke="#3f5fa8" stroke-width="0.10" textLength="21.16" lengthAdjust="spacingAndGlyphs">430,701</text>
<rect x="637.07" y="219.72" width="47.20" height="18.20" fill="#def6fa"/>
<text x="682.39" y="231.07" font-size="6.20" fill="#3f5fa8" text-anchor="end" stroke="#3f5fa8" stroke-width="0.10" textLength="21.16" lengthAdjust="spacingAndGlyphs">552,384</text>
<rect x="685.38" y="219.72" width="47.20" height="18.20" fill="#def6fa"/>
<text x="730.70" y="231.07" font-size="6.20" fill="#3f5fa8" text-anchor="end" stroke="#3f5fa8" stroke-width="0.10" textLength="17.91" lengthAdjust="spacingAndGlyphs">74,612</text>
<rect x="733.69" y="219.72" width="47.20" height="18.20" fill="#def6fa"/>
<text x="779.01" y="231.07" font-size="6.20" fill="#3f5fa8" text-anchor="end" stroke="#3f5fa8" stroke-width="0.10" textLength="3.26" lengthAdjust="spacingAndGlyphs">0</text>
<text x="240.69" y="247.69" font-size="5.90" fill="#3c4043" stroke="#3c4043" stroke-width="0.06" textLength="9.84" lengthAdjust="spacingAndGlyphs">iOS</text>
<text x="240.70" y="254.44" font-size="5.60" fill="#8f9499" stroke="#8f9499" stroke-width="0.08" textLength="29.19" lengthAdjust="spacingAndGlyphs">19,548 users</text>
<rect x="298.90" y="238.94" width="47.20" height="18.20" fill="#def6fa"/>
<text x="344.22" y="250.29" font-size="6.20" fill="#3f5fa8" text-anchor="end" stroke="#3f5fa8" stroke-width="0.10" textLength="21.16" lengthAdjust="spacingAndGlyphs">977,474</text>
<rect x="347.21" y="238.94" width="47.20" height="18.20" fill="#def6fa"/>
<text x="392.53" y="250.29" font-size="6.20" fill="#3f5fa8" text-anchor="end" stroke="#3f5fa8" stroke-width="0.10" textLength="21.16" lengthAdjust="spacingAndGlyphs">585,959</text>
<rect x="395.52" y="238.94" width="47.20" height="18.20" fill="#def6fa"/>
<text x="440.84" y="250.29" font-size="6.20" fill="#3f5fa8" text-anchor="end" stroke="#3f5fa8" stroke-width="0.10" textLength="21.16" lengthAdjust="spacingAndGlyphs">471,931</text>
<rect x="443.83" y="238.94" width="47.20" height="18.20" fill="#def6fa"/>
<text x="489.15" y="250.29" font-size="6.20" fill="#3f5fa8" text-anchor="end" stroke="#3f5fa8" stroke-width="0.10" textLength="21.16" lengthAdjust="spacingAndGlyphs">427,842</text>
<rect x="492.14" y="238.94" width="47.20" height="18.20" fill="#def6fa"/>
<text x="537.46" y="250.29" font-size="6.20" fill="#3f5fa8" text-anchor="end" stroke="#3f5fa8" stroke-width="0.10" textLength="21.16" lengthAdjust="spacingAndGlyphs">378,154</text>
<rect x="540.45" y="238.94" width="47.20" height="18.20" fill="#def6fa"/>
<text x="585.77" y="250.29" font-size="6.20" fill="#3f5fa8" text-anchor="end" stroke="#3f5fa8" stroke-width="0.10" textLength="21.16" lengthAdjust="spacingAndGlyphs">107,394</text>
<rect x="588.76" y="238.94" width="47.20" height="18.20" fill="#def6fa"/>
<text x="634.08" y="250.29" font-size="6.20" fill="#3f5fa8" text-anchor="end" stroke="#3f5fa8" stroke-width="0.10" textLength="21.16" lengthAdjust="spacingAndGlyphs">267,536</text>
<rect x="637.07" y="238.94" width="47.20" height="18.20" fill="#def6fa"/>
<text x="682.39" y="250.29" font-size="6.20" fill="#3f5fa8" text-anchor="end" stroke="#3f5fa8" stroke-width="0.10" textLength="21.16" lengthAdjust="spacingAndGlyphs">361,431</text>
<rect x="685.38" y="238.94" width="47.20" height="18.20" fill="#def6fa"/>
<text x="730.70" y="250.29" font-size="6.20" fill="#3f5fa8" text-anchor="end" stroke="#3f5fa8" stroke-width="0.10" textLength="17.91" lengthAdjust="spacingAndGlyphs">48,199</text>
<rect x="733.69" y="238.94" width="47.20" height="18.20" fill="#def6fa"/>
<text x="779.01" y="250.29" font-size="6.20" fill="#3f5fa8" text-anchor="end" stroke="#3f5fa8" stroke-width="0.10" textLength="3.26" lengthAdjust="spacingAndGlyphs">0</text>
<text x="237.48" y="266.91" font-size="6.30" fill="#3c4043" stroke="#3c4043" stroke-width="0.06" textLength="54.75" lengthAdjust="spacingAndGlyphs">May 30 - Jun 5, 2021</text>
<text x="237.50" y="273.66" font-size="5.60" fill="#8f9499" stroke="#8f9499" stroke-width="0.08" textLength="36.21" lengthAdjust="spacingAndGlyphs">1,079,957 users</text>
<rect x="298.90" y="258.16" width="47.20" height="18.20" fill="#e8e9ed"/>
<text x="344.22" y="269.51" font-size="6.20" fill="#3c4043" text-anchor="end" stroke="#3c4043" stroke-width="0.10" textLength="29.30" lengthAdjust="spacingAndGlyphs">30,828,812</text>
<rect x="347.21" y="258.16" width="47.20" height="18.20" fill="#e8e9ed"/>
<text x="392.53" y="269.51" font-size="6.20" fill="#3c4043" text-anchor="end" stroke="#3c4043" stroke-width="0.10" textLength="28.87" lengthAdjust="spacingAndGlyphs">11,714,121</text>
<rect x="395.52" y="258.16" width="47.20" height="18.20" fill="#e8e9ed"/>
<text x="440.84" y="269.51" font-size="6.20" fill="#3c4043" text-anchor="end" stroke="#3c4043" stroke-width="0.10" textLength="26.04" lengthAdjust="spacingAndGlyphs">7,520,831</text>
<rect x="443.83" y="258.16" width="47.20" height="18.20" fill="#e8e9ed"/>
<text x="489.15" y="269.51" font-size="6.20" fill="#3c4043" text-anchor="end" stroke="#3c4043" stroke-width="0.10" textLength="26.04" lengthAdjust="spacingAndGlyphs">6,012,770</text>
<rect x="492.14" y="258.16" width="47.20" height="18.20" fill="#e8e9ed"/>
<text x="537.46" y="269.51" font-size="6.20" fill="#3c4043" text-anchor="end" stroke="#3c4043" stroke-width="0.10" textLength="21.16" lengthAdjust="spacingAndGlyphs">948,940</text>
<rect x="540.45" y="258.16" width="47.20" height="18.20" fill="#e8e9ed"/>
<text x="585.77" y="269.51" font-size="6.20" fill="#3c4043" text-anchor="end" stroke="#3c4043" stroke-width="0.10" textLength="25.61" lengthAdjust="spacingAndGlyphs">3,049,411</text>
<rect x="588.76" y="258.16" width="47.20" height="18.20" fill="#e8e9ed"/>
<text x="634.08" y="269.51" font-size="6.20" fill="#3c4043" text-anchor="end" stroke="#3c4043" stroke-width="0.10" textLength="26.04" lengthAdjust="spacingAndGlyphs">4,266,389</text>
<rect x="637.07" y="258.16" width="47.20" height="18.20" fill="#e8e9ed"/>
<text x="682.39" y="269.51" font-size="6.20" fill="#3c4043" text-anchor="end" stroke="#3c4043" stroke-width="0.10" textLength="21.16" lengthAdjust="spacingAndGlyphs">417,289</text>
<rect x="685.38" y="258.16" width="47.20" height="18.20" fill="#e8e9ed"/>
<text x="730.70" y="269.51" font-size="6.20" fill="#3c4043" text-anchor="end" stroke="#3c4043" stroke-width="0.10" textLength="3.26" lengthAdjust="spacingAndGlyphs">0</text>
<rect x="733.69" y="258.16" width="47.20" height="18.20" fill="#e8e9ed"/>
<text x="779.01" y="269.51" font-size="6.20" fill="#3c4043" text-anchor="end" stroke="#3c4043" stroke-width="0.10" textLength="3.26" lengthAdjust="spacingAndGlyphs">0</text>
<text x="240.69" y="286.13" font-size="5.90" fill="#3c4043" stroke="#3c4043" stroke-width="0.06" textLength="10.82" lengthAdjust="spacingAndGlyphs">web</text>
<text x="240.70" y="292.88" font-size="5.60" fill="#8f9499" stroke="#8f9499" stroke-width="0.08" textLength="36.21" lengthAdjust="spacingAndGlyphs">1,019,743 users</text>
<rect x="298.90" y="277.38" width="47.20" height="18.20" fill="#25469a"/>
<text x="344.22" y="288.73" font-size="6.20" fill="#ffffff" text-anchor="end" stroke="#ffffff" stroke-width="0.10" textLength="29.30" lengthAdjust="spacingAndGlyphs">28,275,040</text>
<rect x="347.21" y="277.38" width="47.20" height="18.20" fill="#96d4ed"/>
<text x="392.53" y="288.73" font-size="6.20" fill="#30509c" text-anchor="end" stroke="#30509c" stroke-width="0.10" textLength="26.04" lengthAdjust="spacingAndGlyphs">9,992,662</text>
<rect x="395.52" y="277.38" width="47.20" height="18.20" fill="#96d4ed"/>
<text x="440.84" y="288.73" font-size="6.20" fill="#30509c" text-anchor="end" stroke="#30509c" stroke-width="0.10" textLength="26.04" lengthAdjust="spacingAndGlyphs">6,223,921</text>
<rect x="443.83" y="277.38" width="47.20" height="18.20" fill="#def6fa"/>
<text x="489.15" y="288.73" font-size="6.20" fill="#3f5fa8" text-anchor="end" stroke="#3f5fa8" stroke-width="0.10" textLength="26.04" lengthAdjust="spacingAndGlyphs">4,939,765</text>
<rect x="492.14" y="277.38" width="47.20" height="18.20" fill="#def6fa"/>
<text x="537.46" y="288.73" font-size="6.20" fill="#3f5fa8" text-anchor="end" stroke="#3f5fa8" stroke-width="0.10" textLength="21.16" lengthAdjust="spacingAndGlyphs">679,815</text>
<rect x="540.45" y="277.38" width="47.20" height="18.20" fill="#def6fa"/>
<text x="585.77" y="288.73" font-size="6.20" fill="#3f5fa8" text-anchor="end" stroke="#3f5fa8" stroke-width="0.10" textLength="26.04" lengthAdjust="spacingAndGlyphs">2,377,646</text>
<rect x="588.76" y="277.38" width="47.20" height="18.20" fill="#def6fa"/>
<text x="634.08" y="288.73" font-size="6.20" fill="#3f5fa8" text-anchor="end" stroke="#3f5fa8" stroke-width="0.10" textLength="26.04" lengthAdjust="spacingAndGlyphs">3,343,886</text>
<rect x="637.07" y="277.38" width="47.20" height="18.20" fill="#def6fa"/>
<text x="682.39" y="288.73" font-size="6.20" fill="#3f5fa8" text-anchor="end" stroke="#3f5fa8" stroke-width="0.10" textLength="21.16" lengthAdjust="spacingAndGlyphs">290,127</text>
<rect x="685.38" y="277.38" width="47.20" height="18.20" fill="#def6fa"/>
<text x="730.70" y="288.73" font-size="6.20" fill="#3f5fa8" text-anchor="end" stroke="#3f5fa8" stroke-width="0.10" textLength="3.26" lengthAdjust="spacingAndGlyphs">0</text>
<rect x="733.69" y="277.38" width="47.20" height="18.20" fill="#def6fa"/>
<text x="779.01" y="288.73" font-size="6.20" fill="#3f5fa8" text-anchor="end" stroke="#3f5fa8" stroke-width="0.10" textLength="3.26" lengthAdjust="spacingAndGlyphs">0</text>
<text x="240.69" y="305.35" font-size="5.90" fill="#3c4043" stroke="#3c4043" stroke-width="0.06" textLength="20.34" lengthAdjust="spacingAndGlyphs">Android</text>
<text x="240.70" y="312.10" font-size="5.60" fill="#8f9499" stroke="#8f9499" stroke-width="0.08" textLength="29.19" lengthAdjust="spacingAndGlyphs">46,039 users</text>
<rect x="298.90" y="296.60" width="47.20" height="18.20" fill="#def6fa"/>
<text x="344.22" y="307.95" font-size="6.20" fill="#3f5fa8" text-anchor="end" stroke="#3f5fa8" stroke-width="0.10" textLength="26.04" lengthAdjust="spacingAndGlyphs">1,648,215</text>
<rect x="347.21" y="296.60" width="47.20" height="18.20" fill="#def6fa"/>
<text x="392.53" y="307.95" font-size="6.20" fill="#3f5fa8" text-anchor="end" stroke="#3f5fa8" stroke-width="0.10" textLength="26.04" lengthAdjust="spacingAndGlyphs">1,192,072</text>
<rect x="395.52" y="296.60" width="47.20" height="18.20" fill="#def6fa"/>
<text x="440.84" y="307.95" font-size="6.20" fill="#3f5fa8" text-anchor="end" stroke="#3f5fa8" stroke-width="0.10" textLength="21.16" lengthAdjust="spacingAndGlyphs">905,849</text>
<rect x="443.83" y="296.60" width="47.20" height="18.20" fill="#def6fa"/>
<text x="489.15" y="307.95" font-size="6.20" fill="#3f5fa8" text-anchor="end" stroke="#3f5fa8" stroke-width="0.10" textLength="21.16" lengthAdjust="spacingAndGlyphs">739,524</text>
<rect x="492.14" y="296.60" width="47.20" height="18.20" fill="#def6fa"/>
<text x="537.46" y="307.95" font-size="6.20" fill="#3f5fa8" text-anchor="end" stroke="#3f5fa8" stroke-width="0.10" textLength="21.16" lengthAdjust="spacingAndGlyphs">175,163</text>
<rect x="540.45" y="296.60" width="47.20" height="18.20" fill="#def6fa"/>
<text x="585.77" y="307.95" font-size="6.20" fill="#3f5fa8" text-anchor="end" stroke="#3f5fa8" stroke-width="0.10" textLength="21.16" lengthAdjust="spacingAndGlyphs">446,936</text>
<rect x="588.76" y="296.60" width="47.20" height="18.20" fill="#def6fa"/>
<text x="634.08" y="307.95" font-size="6.20" fill="#3f5fa8" text-anchor="end" stroke="#3f5fa8" stroke-width="0.10" textLength="21.16" lengthAdjust="spacingAndGlyphs">597,489</text>
<rect x="637.07" y="296.60" width="47.20" height="18.20" fill="#def6fa"/>
<text x="682.39" y="307.95" font-size="6.20" fill="#3f5fa8" text-anchor="end" stroke="#3f5fa8" stroke-width="0.10" textLength="17.91" lengthAdjust="spacingAndGlyphs">82,653</text>
<rect x="685.38" y="296.60" width="47.20" height="18.20" fill="#def6fa"/>
<text x="730.70" y="307.95" font-size="6.20" fill="#3f5fa8" text-anchor="end" stroke="#3f5fa8" stroke-width="0.10" textLength="3.26" lengthAdjust="spacingAndGlyphs">0</text>
<rect x="733.69" y="296.60" width="47.20" height="18.20" fill="#def6fa"/>
<text x="779.01" y="307.95" font-size="6.20" fill="#3f5fa8" text-anchor="end" stroke="#3f5fa8" stroke-width="0.10" textLength="3.26" lengthAdjust="spacingAndGlyphs">0</text>
<text x="240.69" y="324.57" font-size="5.90" fill="#3c4043" stroke="#3c4043" stroke-width="0.06" textLength="9.84" lengthAdjust="spacingAndGlyphs">iOS</text>
<text x="240.70" y="331.32" font-size="5.60" fill="#8f9499" stroke="#8f9499" stroke-width="0.08" textLength="29.19" lengthAdjust="spacingAndGlyphs">18,364 users</text>
<rect x="298.90" y="315.82" width="47.20" height="18.20" fill="#def6fa"/>
<text x="344.22" y="327.17" font-size="6.20" fill="#3f5fa8" text-anchor="end" stroke="#3f5fa8" stroke-width="0.10" textLength="21.16" lengthAdjust="spacingAndGlyphs">905,557</text>
<rect x="347.21" y="315.82" width="47.20" height="18.20" fill="#def6fa"/>
<text x="392.53" y="327.17" font-size="6.20" fill="#3f5fa8" text-anchor="end" stroke="#3f5fa8" stroke-width="0.10" textLength="21.16" lengthAdjust="spacingAndGlyphs">529,387</text>
<rect x="395.52" y="315.82" width="47.20" height="18.20" fill="#def6fa"/>
<text x="440.84" y="327.17" font-size="6.20" fill="#3f5fa8" text-anchor="end" stroke="#3f5fa8" stroke-width="0.10" textLength="21.16" lengthAdjust="spacingAndGlyphs">391,061</text>
<rect x="443.83" y="315.82" width="47.20" height="18.20" fill="#def6fa"/>
<text x="489.15" y="327.17" font-size="6.20" fill="#3f5fa8" text-anchor="end" stroke="#3f5fa8" stroke-width="0.10" textLength="21.16" lengthAdjust="spacingAndGlyphs">333,481</text>
<rect x="492.14" y="315.82" width="47.20" height="18.20" fill="#def6fa"/>
<text x="537.46" y="327.17" font-size="6.20" fill="#3f5fa8" text-anchor="end" stroke="#3f5fa8" stroke-width="0.10" textLength="17.91" lengthAdjust="spacingAndGlyphs">93,962</text>
<rect x="540.45" y="315.82" width="47.20" height="18.20" fill="#def6fa"/>
<text x="585.77" y="327.17" font-size="6.20" fill="#3f5fa8" text-anchor="end" stroke="#3f5fa8" stroke-width="0.10" textLength="21.16" lengthAdjust="spacingAndGlyphs">224,829</text>
<rect x="588.76" y="315.82" width="47.20" height="18.20" fill="#def6fa"/>
<text x="634.08" y="327.17" font-size="6.20" fill="#3f5fa8" text-anchor="end" stroke="#3f5fa8" stroke-width="0.10" textLength="21.16" lengthAdjust="spacingAndGlyphs">325,014</text>
<rect x="637.07" y="315.82" width="47.20" height="18.20" fill="#def6fa"/>
<text x="682.39" y="327.17" font-size="6.20" fill="#3f5fa8" text-anchor="end" stroke="#3f5fa8" stroke-width="0.10" textLength="17.91" lengthAdjust="spacingAndGlyphs">44,509</text>
<rect x="685.38" y="315.82" width="47.20" height="18.20" fill="#def6fa"/>
<text x="730.70" y="327.17" font-size="6.20" fill="#3f5fa8" text-anchor="end" stroke="#3f5fa8" stroke-width="0.10" textLength="3.26" lengthAdjust="spacingAndGlyphs">0</text>
<rect x="733.69" y="315.82" width="47.20" height="18.20" fill="#def6fa"/>
<text x="779.01" y="327.17" font-size="6.20" fill="#3f5fa8" text-anchor="end" stroke="#3f5fa8" stroke-width="0.10" textLength="3.26" lengthAdjust="spacingAndGlyphs">0</text>
<text x="237.48" y="343.79" font-size="6.30" fill="#3c4043" stroke="#3c4043" stroke-width="0.06" textLength="53.13" lengthAdjust="spacingAndGlyphs">Jun 6 - Jun 12, 2021</text>
<text x="237.50" y="350.54" font-size="5.60" fill="#8f9499" stroke="#8f9499" stroke-width="0.08" textLength="36.21" lengthAdjust="spacingAndGlyphs">1,139,194 users</text>
<rect x="298.90" y="335.04" width="47.20" height="18.20" fill="#e8e9ed"/>
<text x="344.22" y="346.39" font-size="6.20" fill="#3c4043" text-anchor="end" stroke="#3c4043" stroke-width="0.10" textLength="28.87" lengthAdjust="spacingAndGlyphs">31,711,851</text>
<rect x="347.21" y="335.04" width="47.20" height="18.20" fill="#e8e9ed"/>
<text x="392.53" y="346.39" font-size="6.20" fill="#3c4043" text-anchor="end" stroke="#3c4043" stroke-width="0.10" textLength="29.30" lengthAdjust="spacingAndGlyphs">12,184,255</text>
<rect x="395.52" y="335.04" width="47.20" height="18.20" fill="#e8e9ed"/>
<text x="440.84" y="346.39" font-size="6.20" fill="#3c4043" text-anchor="end" stroke="#3c4043" stroke-width="0.10" textLength="26.04" lengthAdjust="spacingAndGlyphs">8,082,370</text>
<rect x="443.83" y="335.04" width="47.20" height="18.20" fill="#e8e9ed"/>
<text x="489.15" y="346.39" font-size="6.20" fill="#3c4043" text-anchor="end" stroke="#3c4043" stroke-width="0.10" textLength="26.04" lengthAdjust="spacingAndGlyphs">1,222,992</text>
<rect x="492.14" y="335.04" width="47.20" height="18.20" fill="#e8e9ed"/>
<text x="537.46" y="346.39" font-size="6.20" fill="#3c4043" text-anchor="end" stroke="#3c4043" stroke-width="0.10" textLength="26.04" lengthAdjust="spacingAndGlyphs">3,879,668</text>
<rect x="540.45" y="335.04" width="47.20" height="18.20" fill="#e8e9ed"/>
<text x="585.77" y="346.39" font-size="6.20" fill="#3c4043" text-anchor="end" stroke="#3c4043" stroke-width="0.10" textLength="26.04" lengthAdjust="spacingAndGlyphs">5,279,531</text>
<rect x="588.76" y="335.04" width="47.20" height="18.20" fill="#e8e9ed"/>
<text x="634.08" y="346.39" font-size="6.20" fill="#3c4043" text-anchor="end" stroke="#3c4043" stroke-width="0.10" textLength="21.16" lengthAdjust="spacingAndGlyphs">505,463</text>
<rect x="637.07" y="335.04" width="47.20" height="18.20" fill="#e8e9ed"/>
<text x="682.39" y="346.39" font-size="6.20" fill="#3c4043" text-anchor="end" stroke="#3c4043" stroke-width="0.10" textLength="3.26" lengthAdjust="spacingAndGlyphs">0</text>
<rect x="685.38" y="335.04" width="47.20" height="18.20" fill="#e8e9ed"/>
<text x="730.70" y="346.39" font-size="6.20" fill="#3c4043" text-anchor="end" stroke="#3c4043" stroke-width="0.10" textLength="3.26" lengthAdjust="spacingAndGlyphs">0</text>
<rect x="733.69" y="335.04" width="47.20" height="18.20" fill="#e8e9ed"/>
<text x="779.01" y="346.39" font-size="6.20" fill="#3c4043" text-anchor="end" stroke="#3c4043" stroke-width="0.10" textLength="3.26" lengthAdjust="spacingAndGlyphs">0</text>
<text x="240.69" y="363.01" font-size="5.90" fill="#3c4043" stroke="#3c4043" stroke-width="0.06" textLength="10.82" lengthAdjust="spacingAndGlyphs">web</text>
<text x="240.70" y="369.76" font-size="5.60" fill="#8f9499" stroke="#8f9499" stroke-width="0.08" textLength="36.21" lengthAdjust="spacingAndGlyphs">1,072,434 users</text>
<rect x="298.90" y="354.26" width="47.20" height="18.20" fill="#25469a"/>
<text x="344.22" y="365.61" font-size="6.20" fill="#ffffff" text-anchor="end" stroke="#ffffff" stroke-width="0.10" textLength="29.30" lengthAdjust="spacingAndGlyphs">28,790,761</text>
<rect x="347.21" y="354.26" width="47.20" height="18.20" fill="#96d4ed"/>
<text x="392.53" y="365.61" font-size="6.20" fill="#30509c" text-anchor="end" stroke="#30509c" stroke-width="0.10" textLength="26.04" lengthAdjust="spacingAndGlyphs">9,940,894</text>
<rect x="395.52" y="354.26" width="47.20" height="18.20" fill="#96d4ed"/>
<text x="440.84" y="365.61" font-size="6.20" fill="#30509c" text-anchor="end" stroke="#30509c" stroke-width="0.10" textLength="26.04" lengthAdjust="spacingAndGlyphs">6,387,623</text>
<rect x="443.83" y="354.26" width="47.20" height="18.20" fill="#def6fa"/>
<text x="489.15" y="365.61" font-size="6.20" fill="#3f5fa8" text-anchor="end" stroke="#3f5fa8" stroke-width="0.10" textLength="20.73" lengthAdjust="spacingAndGlyphs">811,512</text>
<rect x="492.14" y="354.26" width="47.20" height="18.20" fill="#def6fa"/>
<text x="537.46" y="365.61" font-size="6.20" fill="#3f5fa8" text-anchor="end" stroke="#3f5fa8" stroke-width="0.10" textLength="26.04" lengthAdjust="spacingAndGlyphs">2,891,238</text>
<rect x="540.45" y="354.26" width="47.20" height="18.20" fill="#def6fa"/>
<text x="585.77" y="365.61" font-size="6.20" fill="#3f5fa8" text-anchor="end" stroke="#3f5fa8" stroke-width="0.10" textLength="26.04" lengthAdjust="spacingAndGlyphs">3,922,170</text>
<rect x="588.76" y="354.26" width="47.20" height="18.20" fill="#def6fa"/>
<text x="634.08" y="365.61" font-size="6.20" fill="#3f5fa8" text-anchor="end" stroke="#3f5fa8" stroke-width="0.10" textLength="21.16" lengthAdjust="spacingAndGlyphs">326,777</text>
<rect x="637.07" y="354.26" width="47.20" height="18.20" fill="#def6fa"/>
<text x="682.39" y="365.61" font-size="6.20" fill="#3f5fa8" text-anchor="end" stroke="#3f5fa8" stroke-width="0.10" textLength="3.26" lengthAdjust="spacingAndGlyphs">0</text>
<rect x="685.38" y="354.26" width="47.20" height="18.20" fill="#def6fa"/>
<text x="730.70" y="365.61" font-size="6.20" fill="#3f5fa8" text-anchor="end" stroke="#3f5fa8" stroke-width="0.10" textLength="3.26" lengthAdjust="spacingAndGlyphs">0</text>
<rect x="733.69" y="354.26" width="47.20" height="18.20" fill="#def6fa"/>
<text x="779.01" y="365.61" font-size="6.20" fill="#3f5fa8" text-anchor="end" stroke="#3f5fa8" stroke-width="0.10" textLength="3.26" lengthAdjust="spacingAndGlyphs">0</text>
<text x="240.69" y="382.23" font-size="5.90" fill="#3c4043" stroke="#3c4043" stroke-width="0.06" textLength="20.34" lengthAdjust="spacingAndGlyphs">Android</text>
<text x="240.70" y="388.98" font-size="5.60" fill="#8f9499" stroke="#8f9499" stroke-width="0.08" textLength="29.19" lengthAdjust="spacingAndGlyphs">43,359 users</text>
<rect x="298.90" y="373.48" width="47.20" height="18.20" fill="#def6fa"/>
<text x="344.22" y="384.83" font-size="6.20" fill="#3f5fa8" text-anchor="end" stroke="#3f5fa8" stroke-width="0.10" textLength="26.04" lengthAdjust="spacingAndGlyphs">1,948,060</text>
<rect x="347.21" y="373.48" width="47.20" height="18.20" fill="#def6fa"/>
<text x="392.53" y="384.83" font-size="6.20" fill="#3f5fa8" text-anchor="end" stroke="#3f5fa8" stroke-width="0.10" textLength="26.04" lengthAdjust="spacingAndGlyphs">1,670,731</text>
<rect x="395.52" y="373.48" width="47.20" height="18.20" fill="#def6fa"/>
<text x="440.84" y="384.83" font-size="6.20" fill="#3f5fa8" text-anchor="end" stroke="#3f5fa8" stroke-width="0.10" textLength="26.04" lengthAdjust="spacingAndGlyphs">1,265,406</text>
<rect x="443.83" y="373.48" width="47.20" height="18.20" fill="#def6fa"/>
<text x="489.15" y="384.83" font-size="6.20" fill="#3f5fa8" text-anchor="end" stroke="#3f5fa8" stroke-width="0.10" textLength="21.16" lengthAdjust="spacingAndGlyphs">302,861</text>
<rect x="492.14" y="373.48" width="47.20" height="18.20" fill="#def6fa"/>
<text x="537.46" y="384.83" font-size="6.20" fill="#3f5fa8" text-anchor="end" stroke="#3f5fa8" stroke-width="0.10" textLength="21.16" lengthAdjust="spacingAndGlyphs">716,637</text>
<rect x="540.45" y="373.48" width="47.20" height="18.20" fill="#def6fa"/>
<text x="585.77" y="384.83" font-size="6.20" fill="#3f5fa8" text-anchor="end" stroke="#3f5fa8" stroke-width="0.10" textLength="21.16" lengthAdjust="spacingAndGlyphs">996,854</text>
<rect x="588.76" y="373.48" width="47.20" height="18.20" fill="#def6fa"/>
<text x="634.08" y="384.83" font-size="6.20" fill="#3f5fa8" text-anchor="end" stroke="#3f5fa8" stroke-width="0.10" textLength="21.16" lengthAdjust="spacingAndGlyphs">130,519</text>
<rect x="637.07" y="373.48" width="47.20" height="18.20" fill="#def6fa"/>
<text x="682.39" y="384.83" font-size="6.20" fill="#3f5fa8" text-anchor="end" stroke="#3f5fa8" stroke-width="0.10" textLength="3.26" lengthAdjust="spacingAndGlyphs">0</text>
<rect x="685.38" y="373.48" width="47.20" height="18.20" fill="#def6fa"/>
<text x="730.70" y="384.83" font-size="6.20" fill="#3f5fa8" text-anchor="end" stroke="#3f5fa8" stroke-width="0.10" textLength="3.26" lengthAdjust="spacingAndGlyphs">0</text>
<rect x="733.69" y="373.48" width="47.20" height="18.20" fill="#def6fa"/>
<text x="779.01" y="384.83" font-size="6.20" fill="#3f5fa8" text-anchor="end" stroke="#3f5fa8" stroke-width="0.10" textLength="3.26" lengthAdjust="spacingAndGlyphs">0</text>
<text x="240.69" y="401.45" font-size="5.90" fill="#3c4043" stroke="#3c4043" stroke-width="0.06" textLength="9.84" lengthAdjust="spacingAndGlyphs">iOS</text>
<text x="240.70" y="408.20" font-size="5.60" fill="#8f9499" stroke="#8f9499" stroke-width="0.08" textLength="29.19" lengthAdjust="spacingAndGlyphs">19,204 users</text>
<rect x="298.90" y="392.70" width="47.20" height="18.20" fill="#def6fa"/>
<text x="344.22" y="404.05" font-size="6.20" fill="#3f5fa8" text-anchor="end" stroke="#3f5fa8" stroke-width="0.10" textLength="21.16" lengthAdjust="spacingAndGlyphs">973,030</text>
<rect x="347.21" y="392.70" width="47.20" height="18.20" fill="#def6fa"/>
<text x="392.53" y="404.05" font-size="6.20" fill="#3f5fa8" text-anchor="end" stroke="#3f5fa8" stroke-width="0.10" textLength="21.16" lengthAdjust="spacingAndGlyphs">572,630</text>
<rect x="395.52" y="392.70" width="47.20" height="18.20" fill="#def6fa"/>
<text x="440.84" y="404.05" font-size="6.20" fill="#3f5fa8" text-anchor="end" stroke="#3f5fa8" stroke-width="0.10" textLength="21.16" lengthAdjust="spacingAndGlyphs">429,341</text>
<rect x="443.83" y="392.70" width="47.20" height="18.20" fill="#def6fa"/>
<text x="489.15" y="404.05" font-size="6.20" fill="#3f5fa8" text-anchor="end" stroke="#3f5fa8" stroke-width="0.10" textLength="21.16" lengthAdjust="spacingAndGlyphs">108,619</text>
<rect x="492.14" y="392.70" width="47.20" height="18.20" fill="#def6fa"/>
<text x="537.46" y="404.05" font-size="6.20" fill="#3f5fa8" text-anchor="end" stroke="#3f5fa8" stroke-width="0.10" textLength="21.16" lengthAdjust="spacingAndGlyphs">271,793</text>
<rect x="540.45" y="392.70" width="47.20" height="18.20" fill="#def6fa"/>
<text x="585.77" y="404.05" font-size="6.20" fill="#3f5fa8" text-anchor="end" stroke="#3f5fa8" stroke-width="0.10" textLength="21.16" lengthAdjust="spacingAndGlyphs">360,507</text>
<rect x="588.76" y="392.70" width="47.20" height="18.20" fill="#def6fa"/>
<text x="634.08" y="404.05" font-size="6.20" fill="#3f5fa8" text-anchor="end" stroke="#3f5fa8" stroke-width="0.10" textLength="17.91" lengthAdjust="spacingAndGlyphs">48,167</text>
<rect x="637.07" y="392.70" width="47.20" height="18.20" fill="#def6fa"/>
<text x="682.39" y="404.05" font-size="6.20" fill="#3f5fa8" text-anchor="end" stroke="#3f5fa8" stroke-width="0.10" textLength="3.26" lengthAdjust="spacingAndGlyphs">0</text>
<rect x="685.38" y="392.70" width="47.20" height="18.20" fill="#def6fa"/>
<text x="730.70" y="404.05" font-size="6.20" fill="#3f5fa8" text-anchor="end" stroke="#3f5fa8" stroke-width="0.10" textLength="3.26" lengthAdjust="spacingAndGlyphs">0</text>
<rect x="733.69" y="392.70" width="47.20" height="18.20" fill="#def6fa"/>
<text x="779.01" y="404.05" font-size="6.20" fill="#3f5fa8" text-anchor="end" stroke="#3f5fa8" stroke-width="0.10" textLength="3.26" lengthAdjust="spacingAndGlyphs">0</text>
<text x="237.48" y="420.67" font-size="6.30" fill="#3c4043" stroke="#3c4043" stroke-width="0.06" textLength="56.37" lengthAdjust="spacingAndGlyphs">Jun 13 - Jun 19, 2021</text>
<text x="237.50" y="427.42" font-size="5.60" fill="#8f9499" stroke="#8f9499" stroke-width="0.08" textLength="36.21" lengthAdjust="spacingAndGlyphs">1,066,405 users</text>
<rect x="298.90" y="411.92" width="47.20" height="18.20" fill="#e8e9ed"/>
<text x="344.22" y="423.27" font-size="6.20" fill="#3c4043" text-anchor="end" stroke="#3c4043" stroke-width="0.10" textLength="29.30" lengthAdjust="spacingAndGlyphs">30,390,563</text>
<rect x="347.21" y="411.92" width="47.20" height="18.20" fill="#e8e9ed"/>
<text x="392.53" y="423.27" font-size="6.20" fill="#3c4043" text-anchor="end" stroke="#3c4043" stroke-width="0.10" textLength="28.87" lengthAdjust="spacingAndGlyphs">12,117,753</text>
<rect x="395.52" y="411.92" width="47.20" height="18.20" fill="#e8e9ed"/>
<text x="440.84" y="423.27" font-size="6.20" fill="#3c4043" text-anchor="end" stroke="#3c4043" stroke-width="0.10" textLength="26.04" lengthAdjust="spacingAndGlyphs">1,558,100</text>
<rect x="443.83" y="411.92" width="47.20" height="18.20" fill="#e8e9ed"/>
<text x="489.15" y="423.27" font-size="6.20" fill="#3c4043" text-anchor="end" stroke="#3c4043" stroke-width="0.10" textLength="26.04" lengthAdjust="spacingAndGlyphs">4,463,204</text>
<rect x="492.14" y="411.92" width="47.20" height="18.20" fill="#e8e9ed"/>
<text x="537.46" y="423.27" font-size="6.20" fill="#3c4043" text-anchor="end" stroke="#3c4043" stroke-width="0.10" textLength="26.04" lengthAdjust="spacingAndGlyphs">6,218,479</text>
<rect x="540.45" y="411.92" width="47.20" height="18.20" fill="#e8e9ed"/>
<text x="585.77" y="423.27" font-size="6.20" fill="#3c4043" text-anchor="end" stroke="#3c4043" stroke-width="0.10" textLength="21.16" lengthAdjust="spacingAndGlyphs">596,939</text>
<rect x="588.76" y="411.92" width="47.20" height="18.20" fill="#e8e9ed"/>
<text x="634.08" y="423.27" font-size="6.20" fill="#3c4043" text-anchor="end" stroke="#3c4043" stroke-width="0.10" textLength="3.26" lengthAdjust="spacingAndGlyphs">0</text>
<rect x="637.07" y="411.92" width="47.20" height="18.20" fill="#e8e9ed"/>
<text x="682.39" y="423.27" font-size="6.20" fill="#3c4043" text-anchor="end" stroke="#3c4043" stroke-width="0.10" textLength="3.26" lengthAdjust="spacingAndGlyphs">0</text>
<rect x="685.38" y="411.92" width="47.20" height="18.20" fill="#e8e9ed"/>
<text x="730.70" y="423.27" font-size="6.20" fill="#3c4043" text-anchor="end" stroke="#3c4043" stroke-width="0.10" textLength="3.26" lengthAdjust="spacingAndGlyphs">0</text>
<rect x="733.69" y="411.92" width="47.20" height="18.20" fill="#e8e9ed"/>
<text x="779.01" y="423.27" font-size="6.20" fill="#3c4043" text-anchor="end" stroke="#3c4043" stroke-width="0.10" textLength="3.26" lengthAdjust="spacingAndGlyphs">0</text>
</g>
<rect x="218.50" y="431.00" width="441.50" height="3.90" fill="#bfbfbf"/>
<rect x="780.20" y="88.00" width="3.80" height="96.00" fill="#c6c6c6"/>
<rect x="637.50" y="46.20" width="147.50" height="47.80" fill="#ffffff" rx="3.50" filter="url(#sh)"/>
<path d="M646.3 63.8v-6.0h4.4l1.9 1.9v4.1z" fill="none" stroke="#1e8e3e" stroke-width="1.1" stroke-linejoin="round"/>
<path d="M647.8 61.6l1.3-1.1 0.9 0.8 1.6-1.6" fill="none" stroke="#1e8e3e" stroke-width="0.9"/>
<rect x="645.80" y="65.00" width="7.00" height="1.00" fill="#1e8e3e"/>
<text x="657.29" y="63.50" font-size="6.00" fill="#202124" font-weight="bold" textLength="64.92" lengthAdjust="spacingAndGlyphs">Unsampled Exploration</text>
<text x="657.31" y="73.90" font-size="5.40" fill="#6f7378" stroke="#6f7378" stroke-width="0.05" textLength="108.98" lengthAdjust="spacingAndGlyphs">The Exploration is unsampled per your request</text>
<text x="657.31" y="80.30" font-size="5.40" fill="#6f7378" stroke="#6f7378" stroke-width="0.05" textLength="104.88" lengthAdjust="spacingAndGlyphs">and generated based on 100% available data.</text>
</svg></body></html>
